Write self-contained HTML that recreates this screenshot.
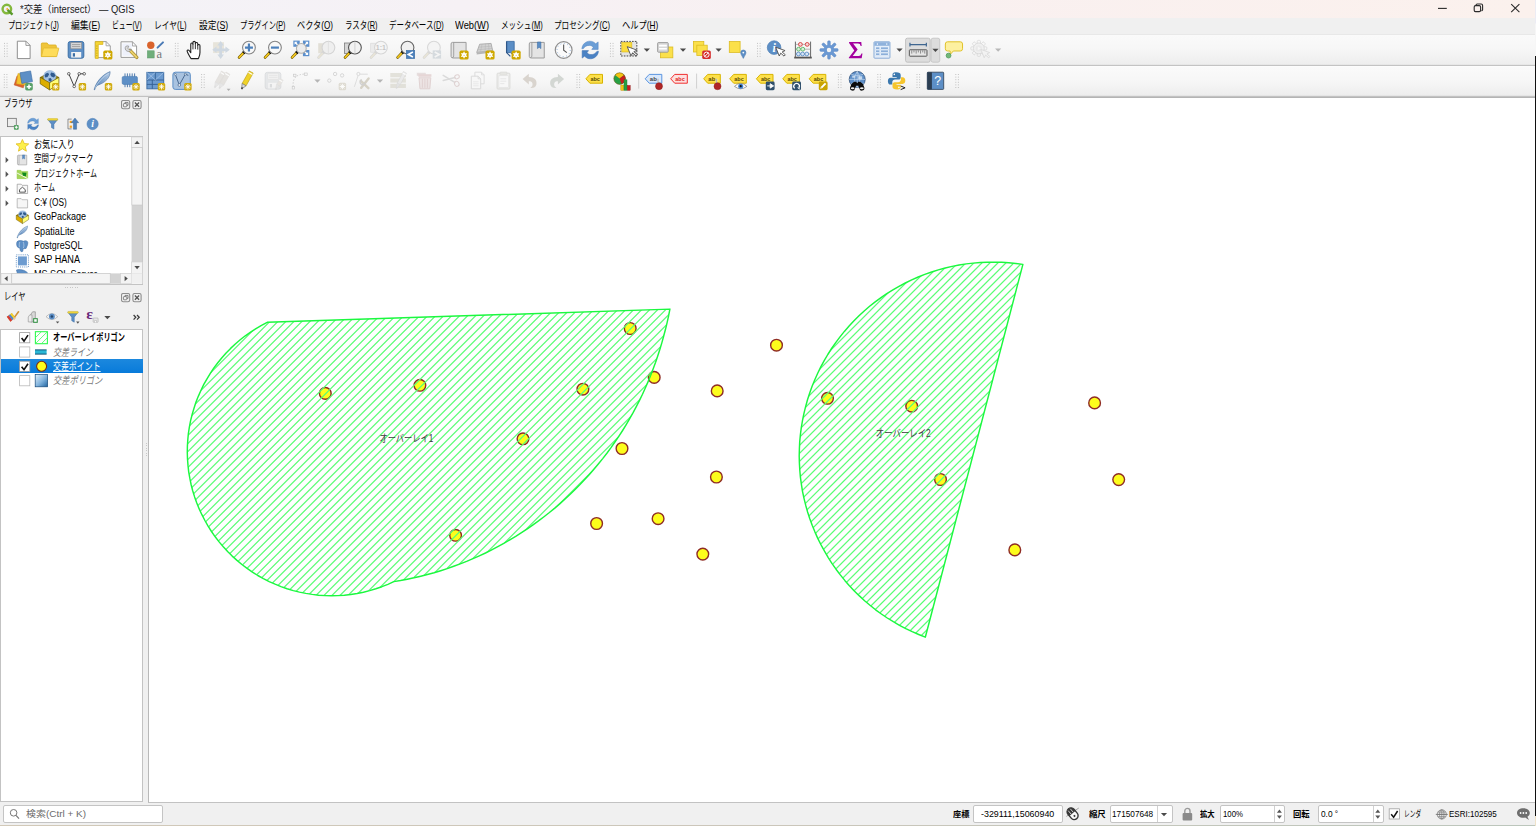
<!DOCTYPE html>
<html lang="ja"><head><meta charset="utf-8"><title>*交差（intersect） — QGIS</title>
<style>
html,body{margin:0;padding:0}
body{width:1536px;height:826px;overflow:hidden;position:relative;background:#f0f0f0;font-family:"Liberation Sans","Noto Sans CJK JP",sans-serif;font-size:10px;color:#000}
div,span,svg{box-sizing:border-box}
.abs{position:absolute}
.t{position:absolute;white-space:nowrap;display:inline-block;transform-origin:0 50%}
u{text-decoration:underline;text-underline-offset:1px}
#titlebar{position:absolute;left:0;top:0;width:1536px;height:18.4px;background:linear-gradient(90deg,#f3f3f8 0%,#f6f1f5 30%,#f9f0f0 60%,#fbf1ed 100%)}
#menubar{position:absolute;left:0;top:18.4px;width:1536px;height:15px;background:#f0f0f0}
.toolbar{position:absolute;left:0;width:1536px}
.toolbar svg{position:absolute;left:0;top:0}
#tb1{top:33.6px;height:32.4px;background:linear-gradient(#e4e4e4 0,#e8e8e8 0.5px,#fafafa 1.2px,#f6f6f6 16px,#eeeeee 29.6px,#e4e4e4 30.8px,#c3c3c3 31.5px,#c3c3c3 32.4px)}
#tb2{top:66px;height:31px;background:linear-gradient(#fdfdfd 0,#fafafa 1.5px,#f6f6f6 16px,#eeeeee 28.4px,#e4e4e4 29.6px,#c2c2c2 30.2px,#c2c2c2 31px)}
.panel-box{position:absolute;background:#fff;border:1px solid #c3c3c3}
#canvas{position:absolute;left:148px;top:97px;width:1386.6px;height:706px;background:#fff;border-left:1px solid #b9b9b9;border-top:1px solid #b4b4b4;border-bottom:1px solid #c2c2c2}
#statusbar{position:absolute;left:0;top:803px;width:1536px;height:23px;background:#f0f0f0}
.field{position:absolute;background:#fff;border:1px solid #c4c4c4;border-radius:2px}
</style></head><body>
<div id="titlebar">
<svg class="abs" style="left:1.4px;top:2.8px" width="13" height="13" viewBox="0 0 14 14"><circle cx="6.3" cy="6.5" r="4.6" fill="none" stroke="#84b83f" stroke-width="2.6"/><path d="M7,7.5 L12.4,12.6" stroke="#5a9a2c" stroke-width="2.6"/><path d="M4.8,6.6 l2.2,-1.6 l1.2,2.6z" fill="#f2a01e"/></svg>
<span id="t1" class="t " style="left:19.5px;top:2.6px;font-size:10.0px;line-height:14px;color:#1a1a1a;transform:scaleX(0.9358);">*交差（intersect） — QGIS</span>
<svg class="abs" style="left:1430px;top:0" width="100" height="18" viewBox="0 0 100 18"><path d="M8,8.4 h8.8" stroke="#2a2a2a" stroke-width="1.1"/><rect x="44.2" y="5.6" width="6.4" height="6" rx="1.3" fill="none" stroke="#2a2a2a" stroke-width="1.1"/><path d="M46,5.4 v-0.2 a1.2,1.2 0 0 1 1.2,-1.2 h4 a1.4,1.4 0 0 1 1.4,1.4 v4 a1.2,1.2 0 0 1 -1.2,1.2" fill="none" stroke="#2a2a2a" stroke-width="1.1"/><path d="M81.2,4.2 l8.2,8 M89.4,4.2 l-8.2,8" stroke="#2a2a2a" stroke-width="1.1"/></svg>
</div>
<div id="menubar">
<span id="t2" class="t " style="left:8.1px;top:0.3px;font-size:10.3px;line-height:14px;color:#000;transform:scaleX(0.6882);">プロジェクト(<u>J</u>)</span>
<span id="t3" class="t " style="left:71.0px;top:0.3px;font-size:10.3px;line-height:14px;color:#000;transform:scaleX(0.8531);">編集(<u>E</u>)</span>
<span id="t4" class="t " style="left:112.2px;top:0.3px;font-size:10.3px;line-height:14px;color:#000;transform:scaleX(0.6653);">ビュー(<u>V</u>)</span>
<span id="t5" class="t " style="left:153.6px;top:0.3px;font-size:10.3px;line-height:14px;color:#000;transform:scaleX(0.7548);">レイヤ(<u>L</u>)</span>
<span id="t6" class="t " style="left:199.0px;top:0.3px;font-size:10.3px;line-height:14px;color:#000;transform:scaleX(0.8531);">設定(<u>S</u>)</span>
<span id="t7" class="t " style="left:240.0px;top:0.3px;font-size:10.3px;line-height:14px;color:#000;transform:scaleX(0.6975);">プラグイン(<u>P</u>)</span>
<span id="t8" class="t " style="left:297.0px;top:0.3px;font-size:10.3px;line-height:14px;color:#000;transform:scaleX(0.7934);">ベクタ(<u>O</u>)</span>
<span id="t9" class="t " style="left:344.5px;top:0.3px;font-size:10.3px;line-height:14px;color:#000;transform:scaleX(0.7222);">ラスタ(<u>R</u>)</span>
<span id="t10" class="t " style="left:388.5px;top:0.3px;font-size:10.3px;line-height:14px;color:#000;transform:scaleX(0.7251);">データベース(<u>D</u>)</span>
<span id="t11" class="t " style="left:455.0px;top:0.3px;font-size:10.3px;line-height:14px;color:#000;transform:scaleX(0.9048);">Web(<u>W</u>)</span>
<span id="t12" class="t " style="left:500.5px;top:0.3px;font-size:10.3px;line-height:14px;color:#000;transform:scaleX(0.7380);">メッシュ(<u>M</u>)</span>
<span id="t13" class="t " style="left:554.2px;top:0.3px;font-size:10.3px;line-height:14px;color:#000;transform:scaleX(0.7372);">プロセシング(<u>C</u>)</span>
<span id="t14" class="t " style="left:622.3px;top:0.3px;font-size:10.3px;line-height:14px;color:#000;transform:scaleX(0.8008);">ヘルプ(<u>H</u>)</span>
</div>
<div id="tb1" class="toolbar"><svg width="1536" height="32.4" viewBox="0 33.6 1536 32.4">
<path d="M175.2,42.5 v14 M177.8,42.5 v14" stroke="#c2c2c2" stroke-width="1" stroke-dasharray="1,1.6" fill="none"/>
<path d="M610.4,42.5 v14 M613.0,42.5 v14" stroke="#c2c2c2" stroke-width="1" stroke-dasharray="1,1.6" fill="none"/>
<path d="M757.5,42.5 v14 M760.1,42.5 v14" stroke="#c2c2c2" stroke-width="1" stroke-dasharray="1,1.6" fill="none"/>
<path d="M4.3,42.5 v14 M6.9,42.5 v14" stroke="#c2c2c2" stroke-width="1" stroke-dasharray="1,1.6" fill="none"/>
<g transform="translate(13.5,39.6)"><path d="M3.6,1.2 H12.2 L16.4,5.4 V18.6 H3.6 Z" fill="#fff" stroke="#8f8f8f" stroke-width="1" stroke-linejoin="round"/><path d="M12.2,1.2 V5.4 H16.4" fill="none" stroke="#8f8f8f" stroke-width="0.9"/></g>
<g transform="translate(39.5,39.6)"><path d="M1.6,4 Q1.6,3 2.6,3 H7.4 L9,5 H15.6 Q16.6,5 16.6,6 V16.4 H1.6 Z" fill="#f0c53a" stroke="#d9ad22" stroke-width="0.8"/><path d="M4.4,8 H18.4 Q19.2,8 19,8.8 L17,16.6 H1.8 L3.6,8.8 Q3.8,8 4.4,8 Z" fill="#fedc5a" stroke="#e2b92e" stroke-width="0.8" stroke-linejoin="round"/></g>
<g transform="translate(66.0,39.6)"><rect x="2" y="1.6" width="15.6" height="16.6" rx="2" fill="#5d8fc6" stroke="#3b6ea5" stroke-width="1"/><rect x="4.6" y="2.6" width="10.8" height="6.2" fill="#d9d9d9" stroke="#8a8a8a" stroke-width="0.6"/><path d="M5.8,4.6 h8.4 M5.8,6.6 h8.4" stroke="#9a9a9a" stroke-width="0.9"/><rect x="5" y="12" width="10" height="5.6" fill="#f4f4f4"/><rect x="6.6" y="13.2" width="2.2" height="3.4" fill="#3b6ea5"/></g>
<g transform="translate(92.7,39.6)"><path d="M2.4,1.6 H13.2 L17.4,5.8 V17.6 H2.4 Z" fill="#fff" stroke="#a0a0a0" stroke-width="1" stroke-linejoin="round"/><path d="M13.2,1.6 V5.8 H17.4" fill="none" stroke="#a0a0a0" stroke-width="0.9"/><path d="M2.4,1.6 H10 V4.4 H5.4 V18.4 H2.4 Z" fill="#f6d535" stroke="#d6b21a" stroke-width="0.7"/><path d="M3.2,6 h1.4 M3.2,8.4 h1.4 M3.2,10.8 h1.4 M3.2,13.2 h1.4 M3.2,15.6 h1.4" stroke="#b8950c" stroke-width="0.6"/><rect x="10.40" y="10.50" width="9.1" height="9.1" rx="1.7" fill="#cfa800"/><polygon points="14.95,11.35 15.97,13.27 18.15,13.20 17.00,15.05 18.15,16.90 15.97,16.83 14.95,18.75 13.93,16.83 11.75,16.90 12.90,15.05 11.75,13.20 13.92,13.27" fill="#fff"/><circle cx="14.95" cy="15.25" r="0.5" fill="#cfa800"/></g>
<g transform="translate(119.2,39.6)"><path d="M1.6,1.8 H13.0 L17.2,6.0 V17.4 H1.6 Z" fill="#fff" stroke="#9a9a9a" stroke-width="1" stroke-linejoin="round"/><path d="M13.0,1.8 V6.0 H17.2" fill="none" stroke="#9a9a9a" stroke-width="0.9"/><rect x="3" y="3.4" width="9.4" height="12.4" fill="#eef1fb"/><path d="M10.6,10.4 L17.4,17.4" stroke="#a58a2a" stroke-width="3.4" stroke-linecap="round"/><path d="M10.8,10.6 L17.2,17.2" stroke="#e9cf6a" stroke-width="2" stroke-linecap="round"/><path d="M6.4,6.4 a3.2,3.2 0 1 0 5.6,3 l-2.2,0.4 l-1.4,-1.6 l1,-2 a3.2,3.2 0 0 0 -3,0.2z" fill="#dcdcdc" stroke="#8a8a8a" stroke-width="0.7"/></g>
<g transform="translate(145.0,39.6)"><circle cx="5.6" cy="5.2" r="3.7" fill="#d9632c"/><path d="M12.4,7.6 L17.8,2.4" stroke="#4a7ab5" stroke-width="2" stroke-linecap="round"/><rect x="2.2" y="10.8" width="6.8" height="7.2" fill="#6fae7a" stroke="#5b9a66" stroke-width="0.5"/><text x="11.4" y="17.6" font-size="12.5" fill="#777" font-family="Liberation Serif,serif">a</text></g>
<g transform="translate(184.6,39.6)"><path d="M6.2,18.6 C4.4,15.4 3,13.4 2.4,11.4 C2,10 3.6,9.4 4.6,10.8 L6,12.8 V4.2 C6,2.6 8.2,2.6 8.2,4.2 V2.6 C8.2,1 10.6,1 10.6,2.6 V3.6 C10.6,2 13,2.2 13,3.8 V5.4 C13,4 15.2,4.2 15.2,5.8 V12.4 C15.2,15.4 14.4,16.8 13.6,18.6 Z" fill="#fff" stroke="#1e1e1e" stroke-width="1.1" stroke-linejoin="round"/><path d="M8.2,4.2 V9.4 M10.6,3.6 V9.2 M13,5.4 V9.6" stroke="#1e1e1e" stroke-width="0.9" fill="none"/></g>
<g transform="translate(211.0,39.6)"><rect x="1.9" y="2.2" width="10.9" height="10.9" fill="#e7e4da"/><path d="M9.5,1.1 L12.8,5.4 H10.9 V8.4 H14.3 V6.5 L18.6,9.8 L14.3,13.1 V11.2 H10.9 V14.4 H12.8 L9.5,18.9 L6.2,14.4 H8.1 V11.2 H5.3 V13.1 L1.1,9.8 L5.3,6.5 V8.4 H8.1 V5.4 H6.2 Z" fill="#cfd8e1"/></g>
<g transform="translate(237.0,39.6)"><path d="M7.4,11.8 L2,17.4" stroke="#6a5600" stroke-width="2.8" stroke-linecap="round"/><path d="M6.3,12.9 L2.1,17.3" stroke="#f3c61e" stroke-width="1.7" stroke-linecap="round"/><path d="M7.6,11.6 L6.1,13.1" stroke="#111" stroke-width="3"/><circle cx="11.8" cy="7.6" r="6.4" fill="#f8f8f8" stroke="#858585" stroke-width="1.1"/><path d="M11.8,3.6 v8 M7.8,7.6 h8" stroke="#4c80bb" stroke-width="2.2"/></g>
<g transform="translate(263.0,39.6)"><path d="M7.4,11.8 L2,17.4" stroke="#6a5600" stroke-width="2.8" stroke-linecap="round"/><path d="M6.3,12.9 L2.1,17.3" stroke="#f3c61e" stroke-width="1.7" stroke-linecap="round"/><path d="M7.6,11.6 L6.1,13.1" stroke="#111" stroke-width="3"/><circle cx="11.8" cy="7.6" r="6.4" fill="#f8f8f8" stroke="#858585" stroke-width="1.1"/><path d="M7.8,7.6 h8" stroke="#4c80bb" stroke-width="2.2"/></g>
<g transform="translate(290.0,39.6)"><rect x="3.2" y="0.6" width="6.4" height="6.2" fill="#5b8fcc"/><rect x="12.8" y="0.6" width="6.4" height="6.2" fill="#5b8fcc"/><rect x="12.8" y="10" width="6.4" height="6.2" fill="#5b8fcc"/><path d="M4.4,1.8 h3 l-1,1 l1.6,1.6 l-1,1 l-1.6,-1.6 l-1,1z M18,1.8 v3 l-1,-1 l-1.6,1.6 l-1,-1 l1.6,-1.6 l-1,-1z M18,15 h-3 l1,-1 l-1.6,-1.6 l1,-1 l1.6,1.6 l1,-1z" fill="#fff"/><path d="M15.4,7 l2.6,1.6 l-2.6,1.6z" fill="#f4f4f4"/><path d="M7.4,11.8 L2,17.4" stroke="#6a5600" stroke-width="2.8" stroke-linecap="round"/><path d="M6.3,12.9 L2.1,17.3" stroke="#f3c61e" stroke-width="1.7" stroke-linecap="round"/><path d="M7.6,11.6 L6.1,13.1" stroke="#111" stroke-width="3"/><circle cx="11.2" cy="8.4" r="4.9" fill="#ececec" stroke="#b0b0b0" stroke-width="1.1"/></g>
<g transform="translate(316.5,39.6)"><rect x="1.6" y="3.2" width="8" height="10" fill="#e2dfd6"/><path d="M7.4,11.8 L2,17.4" stroke="#d6d6d6" stroke-width="2.8" stroke-linecap="round"/><path d="M6.3,12.9 L2.1,17.3" stroke="#e8e4d6" stroke-width="1.7" stroke-linecap="round"/><path d="M7.6,11.6 L6.1,13.1" stroke="#d6d6d6" stroke-width="3"/><circle cx="11.8" cy="7.6" r="6.4" fill="#efefef" stroke="#d4d4d4" stroke-width="1.1"/><path d="M11.8,1.6 v12" stroke="#dedede" stroke-width="0.8"/></g>
<g transform="translate(343.0,39.6)"><rect x="1.4" y="3" width="8" height="10.4" fill="#d6d6d6" stroke="#7d7d7d" stroke-width="0.8"/><path d="M7.4,11.8 L2,17.4" stroke="#6a5600" stroke-width="2.8" stroke-linecap="round"/><path d="M6.3,12.9 L2.1,17.3" stroke="#f3c61e" stroke-width="1.7" stroke-linecap="round"/><path d="M7.6,11.6 L6.1,13.1" stroke="#111" stroke-width="3"/><circle cx="11.8" cy="7.6" r="6.4" fill="#f2f2f2" stroke="#555" stroke-width="1.1"/><path d="M11.8,1.6 v12" stroke="#c8c8c8" stroke-width="0.8"/></g>
<g transform="translate(369.0,39.6)"><rect x="1.6" y="3.2" width="8" height="9" fill="#ebebeb" stroke="#d8d8d8" stroke-width="0.6"/><path d="M7.4,11.8 L2,17.4" stroke="#d6d6d6" stroke-width="2.8" stroke-linecap="round"/><path d="M6.3,12.9 L2.1,17.3" stroke="#e8e4d6" stroke-width="1.7" stroke-linecap="round"/><path d="M7.6,11.6 L6.1,13.1" stroke="#d6d6d6" stroke-width="3"/><circle cx="11.8" cy="7.6" r="6.4" fill="#f5f5f5" stroke="#d6d6d6" stroke-width="1.1"/><text x="11.8" y="10.2" font-size="7" fill="#c6c6c6" text-anchor="middle" font-family="Liberation Sans,sans-serif" font-weight="bold">1:1</text></g>
<g transform="translate(395.6,39.6)"><path d="M7.4,11.8 L2,17.4" stroke="#6a5600" stroke-width="2.8" stroke-linecap="round"/><path d="M6.3,12.9 L2.1,17.3" stroke="#f3c61e" stroke-width="1.7" stroke-linecap="round"/><path d="M7.6,11.6 L6.1,13.1" stroke="#111" stroke-width="3"/><circle cx="11.8" cy="7.6" r="6.4" fill="#f0f0f0" stroke="#666" stroke-width="1.1"/><rect x="10.6" y="10.4" width="8.4" height="8.2" fill="#4c80bb" stroke="#3b6ea5" stroke-width="0.6"/><path d="M17.2,12 L12.6,14.5 L17.2,17" stroke="#fff" stroke-width="1.6" fill="none"/></g>
<g transform="translate(422.0,39.6)"><path d="M7.4,11.8 L2,17.4" stroke="#d8d8d8" stroke-width="2.8" stroke-linecap="round"/><path d="M6.3,12.9 L2.1,17.3" stroke="#e8e4d6" stroke-width="1.7" stroke-linecap="round"/><path d="M7.6,11.6 L6.1,13.1" stroke="#d8d8d8" stroke-width="3"/><circle cx="11.8" cy="7.6" r="6.4" fill="#f4f4f4" stroke="#d8d8d8" stroke-width="1.1"/><rect x="10.6" y="10.4" width="8.4" height="8.2" fill="#d5dade"/><path d="M12.6,12 L17.2,14.5 L12.6,17" stroke="#f4f4f4" stroke-width="1.6" fill="none"/></g>
<g transform="translate(449.0,39.6)"><path d="M3.2,2.4 Q2,2.4 2,4 V16.4 Q2,18 4,18 H17 V2.4 Z" fill="#e4e4e4" stroke="#9c9c9c" stroke-width="1" stroke-linejoin="round"/><path d="M4.6,2.6 V16 Q4.6,17.8 3,17.6" fill="none" stroke="#9c9c9c" stroke-width="0.9"/><rect x="10.40" y="10.50" width="9.1" height="9.1" rx="1.7" fill="#cfa800"/><polygon points="14.95,11.35 15.97,13.27 18.15,13.20 17.00,15.05 18.15,16.90 15.97,16.83 14.95,18.75 13.93,16.83 11.75,16.90 12.90,15.05 11.75,13.20 13.92,13.27" fill="#fff"/><circle cx="14.95" cy="15.25" r="0.5" fill="#cfa800"/></g>
<g transform="translate(475.0,39.6)"><path d="M4.6,4.2 L16,3.4 L17.6,10.8 L1.6,12.4 Z" fill="#d2d2d2" stroke="#a2a2a2" stroke-width="0.8" stroke-linejoin="round"/><path d="M1.6,12.4 L17.6,10.8 V12.6 L1.6,14.4 Z" fill="#b5b5b5"/><path d="M7,4 L5.4,12 M10.4,3.8 L10,11.6 M13.4,3.6 L14,11.2 M3.6,7.2 L16.8,6.2 M2.8,9.8 L17.2,8.4" stroke="#b4b4b4" stroke-width="0.5"/><rect x="10.40" y="10.50" width="9.1" height="9.1" rx="1.7" fill="#cfa800"/><polygon points="14.95,11.35 15.97,13.27 18.15,13.20 17.00,15.05 18.15,16.90 15.97,16.83 14.95,18.75 13.93,16.83 11.75,16.90 12.90,15.05 11.75,13.20 13.92,13.27" fill="#fff"/><circle cx="14.95" cy="15.25" r="0.5" fill="#cfa800"/></g>
<g transform="translate(503.5,39.6)"><path d="M3,1.4 H10.6 V16 L6.8,12.6 L3,12.6 Z" fill="#5b8ec6" stroke="#3f6fa6" stroke-width="0.9" stroke-linejoin="round"/><path d="M3,1.4 V12.6 L6.8,16.4" fill="none" stroke="#2f5688" stroke-width="1.2"/><rect x="8.00" y="10.50" width="9.1" height="9.1" rx="1.7" fill="#cfa800"/><polygon points="12.55,11.35 13.58,13.27 15.75,13.20 14.60,15.05 15.75,16.90 13.58,16.83 12.55,18.75 11.53,16.83 9.35,16.90 10.50,15.05 9.35,13.20 11.53,13.27" fill="#fff"/><circle cx="12.55" cy="15.25" r="0.5" fill="#cfa800"/></g>
<g transform="translate(527.2,39.6)"><path d="M3.2,2.4 Q2,2.4 2,4 V16.4 Q2,18 4,18 H17 V2.4 Z" fill="#e4e4e4" stroke="#9c9c9c" stroke-width="1" stroke-linejoin="round"/><path d="M4.6,2.6 V16 Q4.6,17.8 3,17.6" fill="none" stroke="#9c9c9c" stroke-width="0.9"/><path d="M10.2,2 H13.6 V8.6 L11.9,7.2 L10.2,8.6 Z" fill="#5b8ec6" stroke="#3f6fa6" stroke-width="0.6"/></g>
<g transform="translate(553.6,39.6)"><circle cx="10" cy="10" r="8.4" fill="#fbfbfb" stroke="#8e8e8e" stroke-width="1.2"/><circle cx="10" cy="10" r="6.6" fill="none" stroke="#7ea4d2" stroke-width="0.9" stroke-dasharray="0.9,2.55"/><path d="M10,4.6 V10.2 L13.2,12.6" stroke="#555" stroke-width="1.1" fill="none"/></g>
<g transform="translate(580.0,39.6)"><g transform="scale(1.0)"><path d="M1.8,8.8 C2.2,4 6,1.2 9.8,1.2 C12.2,1.2 14.2,2.2 15.6,3.8 L18.1,1.9 V9.4 H11.7 L13.3,7.2 C12,5.8 10.6,5.4 9.2,5.4 C6.6,5.4 4.6,6.6 3.4,8.6 Z" fill="#6b9ed6" stroke="#4a80c0" stroke-width="0.5" stroke-linejoin="round"/><path d="M1.8,8.8 C2.2,4 6,1.2 9.8,1.2 C12.2,1.2 14.2,2.2 15.6,3.8 L18.1,1.9 V9.4 H11.7 L13.3,7.2 C12,5.8 10.6,5.4 9.2,5.4 C6.6,5.4 4.6,6.6 3.4,8.6 Z" fill="#4a82c4" stroke="#3b70b0" stroke-width="0.5" stroke-linejoin="round" transform="rotate(180 10.1 10)"/></g></g>
<g transform="translate(619.6,39.6)"><rect x="1.2" y="1.4" width="16" height="14.6" fill="#e4e4e4" stroke="#333" stroke-width="0.9" stroke-dasharray="1.6,1.2"/><rect x="2.2" y="2.4" width="10" height="9.6" fill="#fbdc3c" stroke="#d8b81c" stroke-width="0.6"/><path transform="translate(7.6,6.6) rotate(-22) scale(1.00)" d="M0,0 L0,10 L2.6,7.8 L4.6,12 L6.4,11.2 L4.4,7.2 L7.8,7 Z" fill="#fff" stroke="#555" stroke-width="0.9" stroke-linejoin="round"/></g>
<path d="M643.7,48.1 h6.2 l-3.1,3.3z" fill="#4a4a4a"/>
<g transform="translate(656.0,39.6)"><rect x="4.4" y="7" width="12.4" height="10.8" fill="#fbe04a" stroke="#dcbc22" stroke-width="0.8"/><rect x="1.6" y="2.6" width="10.6" height="9.6" rx="0.8" fill="#d8d8d8" stroke="#8c8c8c" stroke-width="0.8"/><path d="M3,5.6 h7.8 M3,8.8 h7.8" stroke="#fff" stroke-width="1.6"/></g>
<path d="M679.9,48.1 h6.2 l-3.1,3.3z" fill="#4a4a4a"/>
<g transform="translate(692.0,39.6)"><rect x="1.4" y="1.6" width="10.4" height="10.4" fill="#fbe04a" stroke="#dcbc22" stroke-width="0.8"/><rect x="4.8" y="5.2" width="10.4" height="10.4" fill="#fbe04a" stroke="#dcbc22" stroke-width="0.8"/><rect x="10.2" y="10.4" width="8.6" height="8.6" rx="1.6" fill="#d52b2b"/><circle cx="14.5" cy="14.7" r="2.6" fill="none" stroke="#fff" stroke-width="1"/><path d="M12.7,16.5 l3.6,-3.6" stroke="#fff" stroke-width="1"/></g>
<path d="M715.5,48.1 h6.2 l-3.1,3.3z" fill="#4a4a4a"/>
<g transform="translate(727.7,39.6)"><rect x="1.6" y="1.6" width="10.8" height="10.8" fill="#fbe04a" stroke="#dcbc22" stroke-width="0.8"/><path d="M15.6,18.4 C14,15.4 13,14.2 13,12.6 A2.6,2.6 0 0 1 18.2,12.6 C18.2,14.2 17.2,15.4 15.6,18.4 Z" fill="#5d8fc6" stroke="#3f6fa6" stroke-width="0.5"/><circle cx="15.6" cy="12.6" r="0.9" fill="#fff"/></g>
<g transform="translate(766.5,39.6)"><circle cx="7.6" cy="7.6" r="6.8" fill="#5d8fc6" stroke="#4d7fb6" stroke-width="0.7"/><text x="7.6" y="11.7" font-size="11.9" font-weight="bold" font-style="italic" fill="#fff" text-anchor="middle" font-family="Liberation Serif,serif">i</text><path transform="translate(9.2,7.2) rotate(-22) scale(0.95)" d="M0,0 L0,10 L2.6,7.8 L4.6,12 L6.4,11.2 L4.4,7.2 L7.8,7 Z" fill="#fff" stroke="#555" stroke-width="0.9" stroke-linejoin="round"/></g>
<g transform="translate(793.0,39.6)"><path d="M2.4,1.6 V17 M17.6,1.6 V17" stroke="#666" stroke-width="1"/><path d="M1.2,17.6 H18.8" stroke="#555" stroke-width="1.8"/><path d="M2.4,4.4 H17.6 M2.4,9.2 H17.6 M2.4,14 H17.6" stroke="#888" stroke-width="0.6"/><circle cx="7.4" cy="4.4" r="1.9" fill="#f7d6d6" stroke="#d53a3a" stroke-width="0.9"/><circle cx="14.2" cy="4.4" r="1.9" fill="#f7d6d6" stroke="#d53a3a" stroke-width="0.9"/><circle cx="5.6" cy="9.2" r="1.9" fill="#d6f0d8" stroke="#5cb567" stroke-width="0.9"/><circle cx="9.8" cy="9.2" r="1.9" fill="#d6f0d8" stroke="#5cb567" stroke-width="0.9"/><circle cx="5.4" cy="14" r="1.9" fill="#d6e6f6" stroke="#5d8fc6" stroke-width="0.9"/><circle cx="9.6" cy="14" r="1.9" fill="#d6e6f6" stroke="#5d8fc6" stroke-width="0.9"/><circle cx="13.8" cy="14" r="1.9" fill="#d6e6f6" stroke="#5d8fc6" stroke-width="0.9"/></g>
<g transform="translate(819.0,39.6)"><g transform="translate(10,10)"><rect x="-1.4" y="-9.2" width="2.8" height="6" rx="1.1" fill="#6a98d2" stroke="#5584c2" stroke-width="0.4" transform="rotate(0)"/><rect x="-1.4" y="-9.2" width="2.8" height="6" rx="1.1" fill="#6a98d2" stroke="#5584c2" stroke-width="0.4" transform="rotate(45)"/><rect x="-1.4" y="-9.2" width="2.8" height="6" rx="1.1" fill="#6a98d2" stroke="#5584c2" stroke-width="0.4" transform="rotate(90)"/><rect x="-1.4" y="-9.2" width="2.8" height="6" rx="1.1" fill="#6a98d2" stroke="#5584c2" stroke-width="0.4" transform="rotate(135)"/><rect x="-1.4" y="-9.2" width="2.8" height="6" rx="1.1" fill="#6a98d2" stroke="#5584c2" stroke-width="0.4" transform="rotate(180)"/><rect x="-1.4" y="-9.2" width="2.8" height="6" rx="1.1" fill="#6a98d2" stroke="#5584c2" stroke-width="0.4" transform="rotate(225)"/><rect x="-1.4" y="-9.2" width="2.8" height="6" rx="1.1" fill="#6a98d2" stroke="#5584c2" stroke-width="0.4" transform="rotate(270)"/><rect x="-1.4" y="-9.2" width="2.8" height="6" rx="1.1" fill="#6a98d2" stroke="#5584c2" stroke-width="0.4" transform="rotate(315)"/><circle r="5.2" fill="#6a98d2"/><circle r="2.2" fill="#f4f4f4"/></g></g>
<g transform="translate(845.7,39.6)"><path d="M3.4,2 H15.6 L16,6 H15 Q14.6,3.6 12.4,3.6 H7.4 L12,9.6 L7,16 H13 Q15.2,16 15.8,13.4 H16.8 L16,18.2 H3.2 V17.4 L8.6,10.4 L3.4,3 Z" fill="#a3009e"/></g>
<g transform="translate(872.0,39.6)"><rect x="2" y="1.8" width="16" height="16.4" rx="0.8" fill="#e6effa" stroke="#7ea4d2" stroke-width="0.9"/><rect x="2.4" y="2.2" width="15.2" height="3.6" fill="#8fb2dc"/><path d="M5.4,3.2 v1.8 M14.8,3.2 v1.8" stroke="#e6effa" stroke-width="1"/><path d="M4,8.2 h3.4 M9,8.2 h7 M4,11.2 h3.4 M9,11.2 h7 M4,14.2 h3.4 M9,14.2 h7" stroke="#6f9bd0" stroke-width="1.3"/><path d="M2.4,9.7 h15.2 M2.4,12.7 h15.2 M2.4,15.7 h15.2" stroke="#c4d6ec" stroke-width="0.5"/></g>
<path d="M896.5,48.1 h6.2 l-3.1,3.3z" fill="#4a4a4a"/>
<rect x="905.6" y="37.8" width="24.6" height="24" rx="1.8" fill="#dddddd" stroke="#b9b9b9" stroke-width="0.8"/><rect x="931.2" y="37.8" width="8.6" height="24" rx="1.8" fill="#dddddd" stroke="#c2c2c2" stroke-width="0.8"/>
<g transform="translate(908.2,39.6)"><path d="M1.8,4.6 H18.2 M1.8,2.8 V6.4 M18.2,2.8 V6.4" stroke="#3f6690" stroke-width="1.2" fill="none"/><rect x="1.2" y="9.8" width="17.6" height="6.4" rx="0.6" fill="#e6e6e6" stroke="#555" stroke-width="1"/><path d="M3.6,10.4 v3.2 M5.8,10.4 v2 M8,10.4 v3.2 M10.2,10.4 v2 M12.4,10.4 v3.2 M14.6,10.4 v2 M16.6,10.4 v3.2" stroke="#666" stroke-width="0.7"/></g>
<path d="M932.4,48.3 h6.2 l-3.1,3.3z" fill="#4a4a4a"/>
<g transform="translate(944.0,39.6)"><path d="M3.6,1.8 H16.4 Q18.6,1.8 18.6,4 V8.8 Q18.6,11 16.4,11 H9.4 L6.2,14.6 V11 H3.6 Q1.4,11 1.4,8.8 V4 Q1.4,1.8 3.6,1.8 Z" fill="#fdf0a0" stroke="#e0c22a" stroke-width="1" stroke-linejoin="round"/><circle cx="4.6" cy="15.6" r="2.4" fill="#72b779" stroke="#4d9a58" stroke-width="0.8"/></g>
<g transform="translate(970.3,39.6)"><g opacity="0.55"><g transform="translate(8.6,8.4)"><rect x="-1.6" y="-8" width="3.2" height="4" rx="1" fill="none" stroke="#c2c2c2" stroke-width="0.8" transform="rotate(0)"/><rect x="-1.6" y="-8" width="3.2" height="4" rx="1" fill="none" stroke="#c2c2c2" stroke-width="0.8" transform="rotate(45)"/><rect x="-1.6" y="-8" width="3.2" height="4" rx="1" fill="none" stroke="#c2c2c2" stroke-width="0.8" transform="rotate(90)"/><rect x="-1.6" y="-8" width="3.2" height="4" rx="1" fill="none" stroke="#c2c2c2" stroke-width="0.8" transform="rotate(135)"/><rect x="-1.6" y="-8" width="3.2" height="4" rx="1" fill="none" stroke="#c2c2c2" stroke-width="0.8" transform="rotate(180)"/><rect x="-1.6" y="-8" width="3.2" height="4" rx="1" fill="none" stroke="#c2c2c2" stroke-width="0.8" transform="rotate(225)"/><rect x="-1.6" y="-8" width="3.2" height="4" rx="1" fill="none" stroke="#c2c2c2" stroke-width="0.8" transform="rotate(270)"/><rect x="-1.6" y="-8" width="3.2" height="4" rx="1" fill="none" stroke="#c2c2c2" stroke-width="0.8" transform="rotate(315)"/><circle r="5.4" fill="#ececec" stroke="#c2c2c2" stroke-width="0.9"/><circle r="3.2" fill="#dedede"/><path d="M-1,-1.8 L2,0 L-1,1.8Z" fill="#f6f6f6"/></g><path transform="translate(10.6,9.4) rotate(-22) scale(0.90)" d="M0,0 L0,10 L2.6,7.8 L4.6,12 L6.4,11.2 L4.4,7.2 L7.8,7 Z" fill="#f2f2f2" stroke="#c8c8c8" stroke-width="0.9" stroke-linejoin="round"/></g></g>
<path d="M995.1,48.1 h6.2 l-3.1,3.3z" fill="#b8b8b8"/>
</svg></div>
<div id="tb2" class="toolbar"><svg width="1536" height="31" viewBox="0 66 1536 31">
<path d="M4.3,74.0 v14 M6.9,74.0 v14" stroke="#c2c2c2" stroke-width="1" stroke-dasharray="1,1.6" fill="none"/>
<path d="M201.6,74.0 v14 M204.2,74.0 v14" stroke="#c2c2c2" stroke-width="1" stroke-dasharray="1,1.6" fill="none"/>
<path d="M577.0,74.0 v14 M579.6,74.0 v14" stroke="#c2c2c2" stroke-width="1" stroke-dasharray="1,1.6" fill="none"/>
<path d="M838.4,74.0 v14 M841.0,74.0 v14" stroke="#c2c2c2" stroke-width="1" stroke-dasharray="1,1.6" fill="none"/>
<path d="M877.8,74.0 v14 M880.4,74.0 v14" stroke="#c2c2c2" stroke-width="1" stroke-dasharray="1,1.6" fill="none"/>
<path d="M917.0,74.0 v14 M919.6,74.0 v14" stroke="#c2c2c2" stroke-width="1" stroke-dasharray="1,1.6" fill="none"/>
<path d="M955.8,74.0 v14 M958.4,74.0 v14" stroke="#c2c2c2" stroke-width="1" stroke-dasharray="1,1.6" fill="none"/>
<g transform="translate(13.2,70.8)"><rect x="2.2" y="6.2" width="9.6" height="9.6" fill="#d9632c" stroke="#c25322" stroke-width="0.5" transform="rotate(18 7 11)"/><rect x="4" y="3.4" width="10.4" height="10.4" fill="#f3c32e" stroke="#d9a91c" stroke-width="0.5" transform="rotate(8 9 8.6)"/><rect x="7.6" y="1" width="10.8" height="10.8" fill="#5d8fc6" stroke="#3f6fa6" stroke-width="0.6" transform="rotate(-10 13 6.4)"/><rect x="12" y="12.2" width="7.6" height="7.4" rx="1.6" fill="#58a068"/><path d="M15.8,13.6 v4.6 M13.5,15.9 h4.6" stroke="#fff" stroke-width="1.5"/></g>
<g transform="translate(39.5,70.8)"><path d="M0.7,6.6 L10.1,1.6 L19.4,6.6 L10.1,11.9 Z" fill="#9c8000" stroke="#6b5a00" stroke-width="0.6"/><circle cx="10.3" cy="5.9" r="6.2" fill="#a4c2e4" stroke="#86a8d0" stroke-width="0.5"/><path d="M6.2,2.6 l2.4,-0.6 l1,1.6 l-1.6,2.6 l-2.2,0.4 l-0.8,-2z M11.6,1.8 l3,0.6 l1.4,2.4 l-1.6,2 l-2.6,-1.2 l-1,-2z M9,7.6 l2.2,-0.4 l1.2,2 l-1.4,1.8 l-1.8,-1z" fill="#2f5a8e"/><path d="M0.7,6.6 L10.1,11.9 V19.1 L0.7,13 Z" fill="#dcae00" stroke="#6b5a00" stroke-width="0.7" stroke-linejoin="round"/><path d="M19.4,6.6 L10.1,11.9 V19.1 L19.4,13 Z" fill="#ffff78" stroke="#6b5a00" stroke-width="0.7" stroke-linejoin="round"/><rect x="12.50" y="12.30" width="7.4" height="7.4" rx="1.5" fill="#d0aa0c"/><path d="M13.50,16.00 L18.90,16.00M14.29,14.09 L18.11,17.91M16.20,13.30 L16.20,18.70M18.11,14.09 L14.29,17.91" stroke="#fff" stroke-width="0.85" fill="none"/></g>
<g transform="translate(66.2,70.8)"><path d="M2.6,3 L8,15.6 L13,3 L18,3" fill="none" stroke="#444" stroke-width="1"/><circle cx="2.6" cy="3" r="1.3" fill="#fff" stroke="#444" stroke-width="0.8"/><circle cx="13" cy="3" r="1.3" fill="#fff" stroke="#444" stroke-width="0.8"/><circle cx="18" cy="3" r="1.3" fill="#fff" stroke="#444" stroke-width="0.8"/><circle cx="8" cy="15.6" r="1.3" fill="#fff" stroke="#444" stroke-width="0.8"/><rect x="12.50" y="12.30" width="7.4" height="7.4" rx="1.5" fill="#d0aa0c"/><path d="M13.50,16.00 L18.90,16.00M14.29,14.09 L18.11,17.91M16.20,13.30 L16.20,18.70M18.11,14.09 L14.29,17.91" stroke="#fff" stroke-width="0.85" fill="none"/></g>
<g transform="translate(92.3,70.8)"><defs><linearGradient id="fg" x1="0" y1="1" x2="1" y2="0"><stop offset="0" stop-color="#4f80b8"/><stop offset="1" stop-color="#b4cbe6"/></linearGradient></defs><path d="M1.8,18.8 C3.6,12.4 8.4,4.6 17.8,0.8 C18,6.4 13.6,11.6 5.4,14.4 C4,15.4 3,16.8 2.4,19 Z" fill="url(#fg)" stroke="#466f9f" stroke-width="0.6" stroke-linejoin="round"/><path d="M2.4,17.6 C5.6,11.6 10,6.4 16.4,2.6" fill="none" stroke="#d4e2f2" stroke-width="0.6"/><rect x="12.50" y="12.30" width="7.4" height="7.4" rx="1.5" fill="#d0aa0c"/><path d="M13.50,16.00 L18.90,16.00M14.29,14.09 L18.11,17.91M16.20,13.30 L16.20,18.70M18.11,14.09 L14.29,17.91" stroke="#fff" stroke-width="0.85" fill="none"/></g>
<g transform="translate(119.8,70.8)"><path d="M5.2,2.6 V6 M7.6,2.6 V6 M10,2.6 V6 M12.4,2.6 V6 M14.8,2.6 V6 M5.2,13 V16.4 M7.6,13 V16.4 M10,13 V16.4" stroke="#3f6fa6" stroke-width="0.9"/><rect x="2.4" y="5.6" width="15.2" height="8" rx="1.4" fill="#5d8fc6" stroke="#4677b0" stroke-width="0.6"/><rect x="12.50" y="12.30" width="7.4" height="7.4" rx="1.5" fill="#d0aa0c"/><path d="M13.50,16.00 L18.90,16.00M14.29,14.09 L18.11,17.91M16.20,13.30 L16.20,18.70M18.11,14.09 L14.29,17.91" stroke="#fff" stroke-width="0.85" fill="none"/></g>
<g transform="translate(145.3,70.8)"><rect x="1.6" y="1.6" width="16.8" height="16.4" fill="#6c9bd0" stroke="#3f6fa6" stroke-width="1"/><path d="M1.6,9.2 H18.4 M10,1.6 V9.2 M7,9.2 V18 M1.6,13.6 H18.4" stroke="#335f93" stroke-width="0.9"/><path d="M1.6,1.6 L10,9.2 M10,1.6 L1.6,9.2 M10,9.2 L18.4,1.6" stroke="#a9c6e6" stroke-width="0.7"/><rect x="12.50" y="12.30" width="7.4" height="7.4" rx="1.5" fill="#d0aa0c"/><path d="M13.50,16.00 L18.90,16.00M14.29,14.09 L18.11,17.91M16.20,13.30 L16.20,18.70M18.11,14.09 L14.29,17.91" stroke="#fff" stroke-width="0.85" fill="none"/></g>
<g transform="translate(171.7,70.8)"><rect x="1.2" y="1.4" width="17.4" height="17.2" rx="2.4" fill="#a9c3e0" stroke="#5d8fc6" stroke-width="1"/><path d="M3.6,3.6 L7.6,14.2 L13.6,3.4 L16.6,4.6" fill="none" stroke="#3d5f88" stroke-width="0.9"/><circle cx="7.6" cy="14.2" r="1.3" fill="#fff" stroke="#3d5f88" stroke-width="0.7"/><circle cx="3.6" cy="3.6" r="1" fill="#fff" stroke="#3d5f88" stroke-width="0.6"/><circle cx="13.6" cy="3.4" r="1" fill="#fff" stroke="#3d5f88" stroke-width="0.6"/><rect x="12.50" y="12.30" width="7.4" height="7.4" rx="1.5" fill="#d0aa0c"/><path d="M13.50,16.00 L18.90,16.00M14.29,14.09 L18.11,17.91M16.20,13.30 L16.20,18.70M18.11,14.09 L14.29,17.91" stroke="#fff" stroke-width="0.85" fill="none"/></g>
<g transform="translate(211.3,70.8)"><g opacity="0.5"><path d="M10.1,0.3 L13.9,2.5 L7.8,13.5 L3.9,11.4 Z" fill="#d4d0ca" stroke="#c4c0ba" stroke-width="0.6"/><path d="M3.9,11.4 L7.8,13.5 L3.4,16.8 Z" fill="#d9d9d9" stroke="#ccc" stroke-width="0.6"/><path d="M4.3,15.2 L3.4,16.8" stroke="#ccc" stroke-width="1.6"/><path d="M9.3,1.7 L13.1,3.9" stroke="#fff" stroke-width="1.2"/><path d="M14.7,1.3 L18.5,3.5 L12.4,14.3 L8.5,12.2 Z" fill="#d4d0ca" stroke="#c4c0ba" stroke-width="0.6"/><path d="M8.5,12.2 L12.4,14.3 L8.0,17.6 Z" fill="#d9d9d9" stroke="#ccc" stroke-width="0.6"/><path d="M8.9,16.0 L8.0,17.6" stroke="#ccc" stroke-width="1.6"/><path d="M13.9,2.7 L17.7,4.9" stroke="#fff" stroke-width="1.2"/></g><path d="M15.4,18 h3.8 l-1.9,2.2z" fill="#b0b0b0"/></g>
<g transform="translate(237.0,70.8)"><path d="M12.2,0.1 L16.2,2.3 L9.1,15.0 L5.1,12.7 Z" fill="#efd228" stroke="#b8990a" stroke-width="0.6"/><path d="M5.1,12.7 L9.1,15.0 L4.6,18.2 Z" fill="#d9d9d9" stroke="#666" stroke-width="0.6"/><path d="M5.5,16.6 L4.6,18.2" stroke="#444" stroke-width="1.6"/><path d="M11.4,1.5 L15.4,3.7" stroke="#fff" stroke-width="1.2"/></g>
<g transform="translate(263.2,70.8)"><g opacity="0.55"><rect x="2" y="1.6" width="15.6" height="16.6" rx="2" fill="#d8dbde" stroke="#c6c9cc" stroke-width="1"/><rect x="4.6" y="2.6" width="10.8" height="6.2" fill="#ebebeb" stroke="#d0d0d0" stroke-width="0.6"/><path d="M5.8,4.6 h8.4 M5.8,6.6 h8.4" stroke="#d6d6d6" stroke-width="0.9"/><rect x="5" y="12" width="10" height="5.6" fill="#f4f4f4"/><rect x="6.6" y="13.2" width="2.2" height="3.4" fill="#c6c9cc"/><path d="M16.8,7.7 L20.0,9.5 L16.5,15.4 L13.4,13.6 Z" fill="#dcd7d0" stroke="#ccc" stroke-width="0.6"/><path d="M13.4,13.6 L16.5,15.4 L12.4,18.8 Z" fill="#d9d9d9" stroke="#ccc" stroke-width="0.6"/><path d="M13.3,17.2 L12.4,18.8" stroke="#ccc" stroke-width="1.6"/><path d="M16.0,9.1 L19.1,10.9" stroke="#fff" stroke-width="1.2"/></g></g>
<g transform="translate(290.0,70.8)"><path d="M3.2,16 C2.6,8 5,3.6 15.4,3.2" fill="none" stroke="#c9c9c9" stroke-width="0.9" stroke-dasharray="1.4,1.6"/><rect x="2.2" y="15.6" width="2.4" height="2.6" fill="#f6f6f6" stroke="#c6c6c6" stroke-width="0.6"/><rect x="3.6" y="3.4" width="2.4" height="2.4" fill="#f6f6f6" stroke="#c6c6c6" stroke-width="0.6"/><rect x="14.6" y="2.2" width="2.6" height="2.4" fill="#f6f6f6" stroke="#c6c6c6" stroke-width="0.6"/></g>
<path d="M314.3,79.5 h6.2 l-3.1,3.3z" fill="#b5b5b5"/>
<g transform="translate(326.5,70.8)"><circle cx="8.6" cy="3.2" r="1.7" fill="none" stroke="#cfcfcf" stroke-width="0.8"/><circle cx="15.6" cy="4.6" r="1.7" fill="none" stroke="#cfcfcf" stroke-width="0.8"/><circle cx="2.8" cy="9.8" r="1.7" fill="none" stroke="#cfcfcf" stroke-width="0.8"/><rect x="12.20" y="12.00" width="7.4" height="7.4" rx="1.5" fill="#dedbd2"/><path d="M13.20,15.70 L18.60,15.70M13.99,13.79 L17.81,17.61M15.90,13.00 L15.90,18.40M17.81,13.79 L13.99,17.61" stroke="#fff" stroke-width="0.85" fill="none"/></g>
<g transform="translate(352.8,70.8)"><circle cx="5.6" cy="3.2" r="1.6" fill="none" stroke="#cdcdcd" stroke-width="0.7"/><path d="M7.4,3.4 H15 M5.2,5 L1.6,16" stroke="#d2d2d2" stroke-width="0.7"/><path d="M8,10 L15.6,17.4 M15.8,7.6 L8.4,17" stroke="#d6d2c6" stroke-width="2.4" stroke-linecap="round"/><path d="M9,8.8 a2.6,2.6 0 1 0 3.4,3" fill="none" stroke="#d0d0d0" stroke-width="1.4"/></g>
<path d="M376.9,79.5 h6.2 l-3.1,3.3z" fill="#b5b5b5"/>
<g transform="translate(388.3,70.8)"><g opacity="0.6"><rect x="2" y="2.2" width="15.6" height="4.2" fill="#d6d4c8"/><rect x="2" y="7.6" width="15.6" height="4.2" fill="#d6d4c8"/><rect x="2" y="13" width="15.6" height="4.2" fill="#d6d4c8"/><path d="M15.1,0.8 L18.1,2.4 L11.9,14.0 L8.9,12.4 Z" fill="#e2e2e2" stroke="#c2c2c2" stroke-width="0.6"/><path d="M8.9,12.4 L11.9,14.0 L8.0,17.6 Z" fill="#d9d9d9" stroke="#ccc" stroke-width="0.6"/><path d="M8.9,16.0 L8.0,17.6" stroke="#ccc" stroke-width="1.6"/><path d="M14.3,2.2 L17.3,3.8" stroke="#fff" stroke-width="1.2"/></g></g>
<g transform="translate(413.8,70.8)"><g opacity="0.55"><rect x="3" y="2" width="9" height="3" fill="#d9c9c9"/><rect x="4.6" y="3.4" width="13" height="2.6" fill="#d8bcbc"/><path d="M5.2,7 H17 L16,18 H6.2 Z" fill="#e6d6d6" stroke="#d0b6b6" stroke-width="1"/><path d="M8.6,8 V17 M11.1,8 V17 M13.6,8 V17" stroke="#d0b6b6" stroke-width="1"/></g></g>
<g transform="translate(441.4,70.8)"><g opacity="0.7"><path d="M1.8,4.6 L13.4,11.6 M1.8,9.6 L13.6,6.6" stroke="#cfcfcf" stroke-width="1.5" stroke-linecap="round"/><ellipse cx="15.6" cy="6" rx="2.4" ry="1.9" fill="none" stroke="#d6c4c4" stroke-width="1" transform="rotate(-25 15.6 6)"/><ellipse cx="15.4" cy="13" rx="2.2" ry="2.6" fill="none" stroke="#d6c4c4" stroke-width="1" transform="rotate(-30 15.4 13)"/></g></g>
<g transform="translate(467.7,70.8)"><g opacity="0.7"><path d="M7.2,1.4 H13.8 L16.4,4.0 V13.0 H7.2 Z" fill="#f8f8f8" stroke="#d2d2d2" stroke-width="1" stroke-linejoin="round"/><path d="M13.8,1.4 V4.0 H16.4" fill="none" stroke="#d2d2d2" stroke-width="0.9"/><path d="M3.6,5.4 H10.4 L13.0,8.0 V18.0 H3.6 Z" fill="#f8f8f8" stroke="#cfcfcf" stroke-width="1" stroke-linejoin="round"/><path d="M10.4,5.4 V8.0 H13.0" fill="none" stroke="#cfcfcf" stroke-width="0.9"/><path d="M5.4,11 h5.6 M5.4,13 h5.6 M5.4,15 h5.6" stroke="#dedede" stroke-width="0.7"/></g></g>
<g transform="translate(493.5,70.8)"><g opacity="0.75"><rect x="3.6" y="2.4" width="12.8" height="15.8" rx="0.8" fill="#ececea" stroke="#d0d0cc" stroke-width="0.9"/><rect x="6.6" y="1.2" width="6.8" height="2.8" rx="0.6" fill="#e0e0dc" stroke="#d0d0cc" stroke-width="0.6"/><rect x="5.4" y="5" width="9.4" height="11.6" fill="#f8f8f8" stroke="#d6d6d6" stroke-width="0.5"/><path d="M6.8,8 h6 M6.8,10.4 h6 M6.8,12.8 h4" stroke="#dadada" stroke-width="0.7"/></g></g>
<g transform="translate(520.2,70.8)"><path d="M2.4,8.2 L8.6,3 V6.2 C14,6.2 17,9 16.2,13.6 C15.6,16.4 13,17.4 10,17 C12.4,15.8 12.8,13.6 12,12 C11.4,10.8 10.2,10.4 8.6,10.4 V13.6 Z" fill="#d9d4ce"/></g>
<g transform="translate(546.5,70.8)"><path d="M17.6,8.2 L11.4,3 V6.2 C6,6.2 3,9 3.8,13.6 C4.4,16.4 7,17.4 10,17 C7.6,15.8 7.2,13.6 8,12 C8.6,10.8 9.8,10.4 11.4,10.4 V13.6 Z" fill="#d3d7d3"/></g>
<g transform="translate(584.7,70.8)"><path d="M1.2,8.0 L5.2,3.6 H17.8 V12.4 H5.2 Z" fill="#fde04a" stroke="#d8b400" stroke-width="1" stroke-linejoin="round"/><text x="5.8" y="10.2" font-size="6.2" font-weight="bold" fill="#5a4a00" font-family="Liberation Sans,sans-serif" textLength="9.4" lengthAdjust="spacingAndGlyphs">abc</text></g>
<g transform="translate(612.4,71.8)"><circle cx="7.2" cy="6.8" r="5.8" fill="#27a043"/><path d="M7.2,6.8 L2.6,3.2 A5.8,5.8 0 0 1 11.8,3.2 Z" fill="#f5c211"/><path d="M7.2,6.8 L11.8,3.2 A5.8,5.8 0 0 1 9,12.3 Z" fill="#c81e1e"/><circle cx="7.2" cy="6.8" r="5.8" fill="none" stroke="#704a10" stroke-width="0.5"/><rect x="8.4" y="13.2" width="3" height="5.4" fill="#f5c211" stroke="#b58a00" stroke-width="0.4"/><rect x="11.6" y="8" width="3" height="10.6" fill="#27a043" stroke="#1b7a30" stroke-width="0.4"/><rect x="14.8" y="13.6" width="3" height="5" fill="#c81e1e" stroke="#8a1010" stroke-width="0.4"/></g>
<path d="M638.7,73.6 V88.6" stroke="#d0d0d0" stroke-width="1"/><path d="M696.6,73.6 V88.6" stroke="#d0d0d0" stroke-width="1"/>
<g transform="translate(644.0,70.8)"><path d="M1.2,8.0 L5.2,3.6 H17.8 V12.4 H5.2 Z" fill="#d9e8fb" stroke="#5b95e0" stroke-width="1" stroke-linejoin="round"/><text x="5.8" y="10.2" font-size="6.2" font-weight="bold" fill="#444" font-family="Liberation Sans,sans-serif" textLength="7.0" lengthAdjust="spacingAndGlyphs">ab</text><path d="M14,8 V13" stroke="#e0e0e0" stroke-width="1.6"/><path d="M14,8 V13" stroke="#9a9a9a" stroke-width="0.6"/><circle cx="15" cy="15.4" r="3.5" fill="#b02626" stroke="#8a1a1a" stroke-width="0.5"/></g>
<g transform="translate(669.5,70.8)"><path d="M1.2,8.0 L5.2,3.6 H17.8 V12.4 H5.2 Z" fill="#fde0e0" stroke="#f03030" stroke-width="1" stroke-linejoin="round"/><text x="5.8" y="10.2" font-size="6.2" font-weight="bold" fill="#e02020" font-family="Liberation Sans,sans-serif" textLength="9.4" lengthAdjust="spacingAndGlyphs">abc</text></g>
<g transform="translate(702.5,70.8)"><path d="M1.2,8.0 L5.2,3.6 H17.8 V12.4 H5.2 Z" fill="#fde04a" stroke="#d8b400" stroke-width="1" stroke-linejoin="round"/><text x="5.8" y="10.2" font-size="6.2" font-weight="bold" fill="#5a4a00" font-family="Liberation Sans,sans-serif" textLength="7.0" lengthAdjust="spacingAndGlyphs">ab</text><path d="M14,8 V13" stroke="#e0e0e0" stroke-width="1.6"/><path d="M14,8 V13" stroke="#9a9a9a" stroke-width="0.6"/><circle cx="15" cy="15.4" r="3.5" fill="#b02626" stroke="#8a1a1a" stroke-width="0.5"/></g>
<g transform="translate(728.5,70.8)"><path d="M1.2,8.0 L5.2,3.6 H17.8 V12.4 H5.2 Z" fill="#fde04a" stroke="#d8b400" stroke-width="1" stroke-linejoin="round"/><text x="5.8" y="10.2" font-size="6.2" font-weight="bold" fill="#5a4a00" font-family="Liberation Sans,sans-serif" textLength="9.4" lengthAdjust="spacingAndGlyphs">abc</text><path d="M6,15.6 Q12,9.6 18.4,15.6 Q12,20.4 6,15.6 Z" fill="#fff" stroke="#777" stroke-width="0.7"/><circle cx="12.2" cy="15.4" r="2.5" fill="#3d7fd0"/><circle cx="12.2" cy="15.4" r="1.1" fill="#111"/></g>
<g transform="translate(755.2,70.8)"><path d="M1.2,8.0 L5.2,3.6 H17.8 V12.4 H5.2 Z" fill="#fde04a" stroke="#d8b400" stroke-width="1" stroke-linejoin="round"/><text x="5.8" y="10.2" font-size="6.2" font-weight="bold" fill="#5a4a00" font-family="Liberation Sans,sans-serif" textLength="9.4" lengthAdjust="spacingAndGlyphs">abc</text><rect x="10.6" y="10.8" width="8.8" height="8.6" rx="1.4" fill="#2f4f6c"/><path d="M12,15.1 h3 v-2.2 l3.4,2.2 l-3.4,2.2 v-2.2" fill="#fff" stroke="#fff" stroke-width="0.9" stroke-linejoin="round"/></g>
<g transform="translate(781.6,70.8)"><path d="M1.2,8.0 L5.2,3.6 H17.8 V12.4 H5.2 Z" fill="#fde04a" stroke="#d8b400" stroke-width="1" stroke-linejoin="round"/><text x="5.8" y="10.2" font-size="6.2" font-weight="bold" fill="#5a4a00" font-family="Liberation Sans,sans-serif" textLength="9.4" lengthAdjust="spacingAndGlyphs">abc</text><rect x="10.6" y="10.8" width="8.8" height="8.6" rx="1.4" fill="#2f4f6c"/><path d="M13.2,17.6 A2.8,2.8 0 1 1 17.4,16.8" fill="none" stroke="#fff" stroke-width="1.2"/><path d="M15.4,16.6 h2.6 v2.4z" fill="#fff"/></g>
<g transform="translate(808.0,70.8)"><path d="M1.2,8.0 L5.2,3.6 H17.8 V12.4 H5.2 Z" fill="#fde04a" stroke="#d8b400" stroke-width="1" stroke-linejoin="round"/><text x="5.8" y="10.2" font-size="6.2" font-weight="bold" fill="#5a4a00" font-family="Liberation Sans,sans-serif" textLength="9.4" lengthAdjust="spacingAndGlyphs">abc</text><rect x="10.8" y="10.8" width="8.8" height="8.6" rx="1.4" fill="#c9a400"/><path d="M17.6,12.6 L13.4,16.8" stroke="#fff" stroke-width="2"/><path d="M12.2,18 l0.6,-1.8 l1.2,1.2z" fill="#fff"/></g>
<g transform="translate(847.2,70.8)"><circle cx="10" cy="8.6" r="8" fill="#5e8fc8" stroke="#2d4f7a" stroke-width="0.8"/><path d="M2,8.6 H18 M10,0.6 V16 M4,3.6 Q10,6.4 16,3.6 M3.4,13 Q10,10.4 16.6,13 M10,0.6 Q4.6,8.6 10,16.6 M10,0.6 Q15.4,8.6 10,16.6" fill="none" stroke="#cfe0f4" stroke-width="0.6"/><path d="M5,5 h3 v2 h-3z M11,5.4 h4 v3 h-4z" fill="#dbe8f6" opacity="0.8"/><path d="M4.4,13 L7,11 H9 L10,12.4 L11,11 H13 L15.6,13 L17.2,17 A2.4,2.4 0 0 1 12.2,17.6 L11.2,15 H8.8 L7.8,17.6 A2.4,2.4 0 0 1 2.8,17 Z" fill="#0c0c0c"/><ellipse cx="5.4" cy="17.4" rx="1.9" ry="1" fill="#f0f0f0"/><ellipse cx="14.6" cy="17.4" rx="1.9" ry="1" fill="#f0f0f0"/></g>
<g transform="translate(886.5,70.8)"><path d="M9.6,1.4 C6.4,1.4 6,2.8 6,4.2 V6.2 H10.2 V7 H4.2 C2.2,7 1.4,8.6 1.4,10.4 C1.4,12.4 2.2,13.8 4.2,13.8 H5.8 V11.4 C5.8,9.8 7,8.8 8.6,8.8 H12 C13.4,8.8 14.2,7.8 14.2,6.6 V4.2 C14.2,2.4 12.6,1.4 9.6,1.4 Z" fill="#3b78ae"/><circle cx="7.8" cy="3.6" r="0.8" fill="#fff"/><path d="M10.6,18.8 C13.8,18.8 14.2,17.4 14.2,16 V14 H10 V13.2 H16 C18,13.2 18.8,11.6 18.8,9.8 C18.8,7.8 18,6.4 16,6.4 H14.4 V8.8 C14.4,10.4 13.2,11.4 11.6,11.4 H8.2 C6.8,11.4 6,12.4 6,13.6 V16 C6,17.8 7.6,18.8 10.6,18.8 Z" fill="#f6c52d"/><circle cx="12.4" cy="16.6" r="0.8" fill="#fff"/><path d="M14.2,15.2 L18.6,17 L14.2,18.8" fill="none" stroke="#222" stroke-width="1"/></g>
<g transform="translate(925.5,70.8)"><rect x="1.8" y="1.4" width="16.4" height="17.2" rx="0.8" fill="#5d8fc6" stroke="#2c3e52" stroke-width="0.8"/><rect x="1.8" y="1.4" width="4.6" height="17.2" fill="#2c3e52"/><text x="12.2" y="14.6" font-size="12.5" fill="#fff" text-anchor="middle" font-family="Liberation Sans,sans-serif">?</text></g>
</svg></div>
<div id="browser" class="abs" style="left:0;top:97px;width:148px;height:190px">
</div>
<span id="t15" class="t " style="left:3.6px;top:97.0px;font-size:10.4px;line-height:14px;color:#000;transform:scaleX(0.6857);">ブラウザ</span>
<svg class="abs" style="left:121.4px;top:100.0px" width="22" height="10" viewBox="0 0 22 10">
<rect x="0.5" y="0.5" width="8.2" height="8.2" rx="1.7" fill="#f1f1f1" stroke="#8e8e8e" stroke-width="1.1"/><rect x="2.4" y="3.6" width="3.4" height="3.2" rx="0.6" fill="none" stroke="#6a6a6a" stroke-width="0.8"/><path d="M4,3.4 V2.4 H7 V5.4 H6" fill="none" stroke="#6a6a6a" stroke-width="0.8"/>
<rect x="11.9" y="0.5" width="8.2" height="8.2" rx="1.7" fill="#f1f1f1" stroke="#8e8e8e" stroke-width="1.1"/><path d="M13.9,2.5 l4.2,4.2 M18.1,2.5 l-4.2,4.2" stroke="#555" stroke-width="1.3"/>
</svg>
<svg class="abs" style="left:0;top:112.0px" width="148" height="24" viewBox="0 0 148 24">
<g transform="translate(6.4,5.4) scale(0.66)"><rect x="1.6" y="1.4" width="13.4" height="12.6" fill="#ececec" stroke="#707070" stroke-width="1.2"/><rect x="11.4" y="11.4" width="7.2" height="7.2" rx="1.4" fill="#4f9e5e"/><path d="M15,12.8 v4.4 M12.8,15 h4.4" stroke="#fff" stroke-width="1.6"/></g>
<g transform="translate(26.4,5.4) scale(0.66)"><g transform="scale(1.0)"><path d="M1.8,8.8 C2.2,4 6,1.2 9.8,1.2 C12.2,1.2 14.2,2.2 15.6,3.8 L18.1,1.9 V9.4 H11.7 L13.3,7.2 C12,5.8 10.6,5.4 9.2,5.4 C6.6,5.4 4.6,6.6 3.4,8.6 Z" fill="#6b9ed6" stroke="#4a80c0" stroke-width="0.5" stroke-linejoin="round"/><path d="M1.8,8.8 C2.2,4 6,1.2 9.8,1.2 C12.2,1.2 14.2,2.2 15.6,3.8 L18.1,1.9 V9.4 H11.7 L13.3,7.2 C12,5.8 10.6,5.4 9.2,5.4 C6.6,5.4 4.6,6.6 3.4,8.6 Z" fill="#4a82c4" stroke="#3b70b0" stroke-width="0.5" stroke-linejoin="round" transform="rotate(180 10.1 10)"/></g></g>
<g transform="translate(46.1,5.4) scale(0.66)"><path d="M2.4,3 H17.6 L11.8,10.2 V17.6 L8.2,15.4 V10.2 Z" fill="#5d8fc6" stroke="#3b6ea5" stroke-width="0.8" stroke-linejoin="round"/><rect x="2.4" y="1.8" width="15.2" height="2.6" rx="0.8" fill="#f3d93c" stroke="#d2b21a" stroke-width="0.6"/></g>
<g transform="translate(66.4,5.4) scale(0.66)"><path d="M2.4,2.6 H8 M2.4,2.6 V17.4 H8" fill="none" stroke="#777" stroke-width="1.2"/><rect x="5" y="5.2" width="3.4" height="3.4" fill="#f2a01e"/><rect x="5" y="12.4" width="3.4" height="3.4" fill="#f2a01e"/><path d="M13,1 L18.6,8 H15.4 V18 H10.6 V8 H7.4 Z" fill="#4c80bb" stroke="#365f90" stroke-width="0.7"/></g>
<g transform="translate(86.0,5.4) scale(0.66)"><circle cx="10" cy="10" r="8.6" fill="#5d8fc6" stroke="#4d7fb6" stroke-width="0.7"/><text x="10" y="15.2" font-size="15.0" font-weight="bold" font-style="italic" fill="#fff" text-anchor="middle" font-family="Liberation Serif,serif">i</text></g>
</svg>
<div class="panel-box" style="left:0;top:136.4px;width:143.2px;height:148.2px;overflow:hidden"></div>
<span id="t16" class="t " style="left:33.9px;top:138.3px;font-size:10.3px;line-height:14px;color:#000;transform:scaleX(0.7886);">お気に入り</span>
<span id="t17" class="t " style="left:33.9px;top:152.4px;font-size:10.3px;line-height:14px;color:#000;transform:scaleX(0.7199);">空間ブックマーク</span>
<span id="t18" class="t " style="left:33.9px;top:166.8px;font-size:10.3px;line-height:14px;color:#000;transform:scaleX(0.6820);">プロジェクトホーム</span>
<span id="t19" class="t " style="left:33.9px;top:181.2px;font-size:10.3px;line-height:14px;color:#000;transform:scaleX(0.6930);">ホーム</span>
<span id="t20" class="t " style="left:33.9px;top:195.8px;font-size:10.0px;line-height:14px;color:#000;transform:scaleX(0.8288);">C:¥ (OS)</span>
<span id="t21" class="t " style="left:33.9px;top:210.2px;font-size:10.0px;line-height:14px;color:#000;transform:scaleX(0.9009);">GeoPackage</span>
<span id="t22" class="t " style="left:33.9px;top:224.7px;font-size:10.0px;line-height:14px;color:#000;transform:scaleX(0.9127);">SpatiaLite</span>
<span id="t23" class="t " style="left:33.9px;top:239.2px;font-size:10.0px;line-height:14px;color:#000;transform:scaleX(0.8883);">PostgreSQL</span>
<span id="t24" class="t " style="left:33.9px;top:253.4px;font-size:10.0px;line-height:14px;color:#000;transform:scaleX(0.9129);">SAP HANA</span>
<div class="abs" style="left:1px;top:262px;width:130.6px;height:11.4px;overflow:hidden"><span id="t25" class="t " style="left:32.9px;top:5.7px;font-size:10.0px;line-height:14px;color:#000;transform:scaleX(0.9059);">MS SQL Server</span></div>
<svg class="abs" style="left:0;top:136.0px" width="144" height="150" viewBox="0 0 144 150">
<defs><clipPath id="bclip"><rect x="1" y="1" width="130.6" height="137"/></clipPath></defs><g clip-path="url(#bclip)">
<path d="M5.6,20.9 v6 l3,-3z" fill="#555"/>
<path d="M5.6,35.3 v6 l3,-3z" fill="#555"/>
<path d="M5.6,49.8 v6 l3,-3z" fill="#555"/>
<path d="M5.6,64.2 v6 l3,-3z" fill="#555"/>
<g transform="translate(15.8,2.9) scale(0.66)"><path d="M10,0.8 L12.8,7 L19.6,7.6 L14.4,12 L16,18.6 L10,15 L4,18.6 L5.6,12 L0.4,7.6 L7.2,7 Z" fill="#fdf04a" stroke="#e0bc1a" stroke-width="1.2" stroke-linejoin="round"/></g>
<g transform="translate(16.2,17.7) scale(0.62)"><path d="M3.2,2.4 Q2,2.4 2,4 V16.4 Q2,18 4,18 H17 V2.4 Z" fill="#e4e4e4" stroke="#9c9c9c" stroke-width="1" stroke-linejoin="round"/><path d="M4.6,2.6 V16 Q4.6,17.8 3,17.6" fill="none" stroke="#9c9c9c" stroke-width="0.9"/><path d="M10.2,2 H13.6 V8.6 L11.9,7.2 L10.2,8.6 Z" fill="#5b8ec6" stroke="#3f6fa6" stroke-width="0.6"/></g>
<g transform="translate(16.2,32.1) scale(0.62)"><path d="M1.4,3.6 H7.4 L9,5.4 H18.6 V17 H1.4 Z" fill="#a5d65a" stroke="#8cc63e" stroke-width="0.8"/><path d="M1.4,8 L18.6,17" stroke="#fff" stroke-width="1.4"/><path d="M9.4,7 L16.6,7.4 L15.6,13 L11,12.4 Z" fill="#0f8a1e"/></g>
<g transform="translate(16.2,46.6) scale(0.62)"><path d="M1.6,2.6 H8 L9.6,4.4 H18.4 V17.6 H1.6 Z" fill="#f8f8f8" stroke="#8a8a8a" stroke-width="1"/><path d="M5.4,11.4 L10,7.4 L14.6,11.4 V15.4 H5.4 Z" fill="#fff" stroke="#333" stroke-width="1.3" stroke-linejoin="round"/></g>
<g transform="translate(16.2,61.0) scale(0.62)"><path d="M1.6,2.6 H8 L9.6,4.4 H18.4 V17.6 H1.6 Z" fill="#f6f6f6" stroke="#9a9a9a" stroke-width="1"/></g>
<g transform="translate(15.8,75.0) scale(0.66)"><path d="M0.7,6.6 L10.1,1.6 L19.4,6.6 L10.1,11.9 Z" fill="#9c8000" stroke="#6b5a00" stroke-width="0.6"/><circle cx="10.3" cy="5.9" r="6.2" fill="#a4c2e4" stroke="#86a8d0" stroke-width="0.5"/><path d="M6.2,2.6 l2.4,-0.6 l1,1.6 l-1.6,2.6 l-2.2,0.4 l-0.8,-2z M11.6,1.8 l3,0.6 l1.4,2.4 l-1.6,2 l-2.6,-1.2 l-1,-2z M9,7.6 l2.2,-0.4 l1.2,2 l-1.4,1.8 l-1.8,-1z" fill="#2f5a8e"/><path d="M0.7,6.6 L10.1,11.9 V19.1 L0.7,13 Z" fill="#dcae00" stroke="#6b5a00" stroke-width="0.7" stroke-linejoin="round"/><path d="M19.4,6.6 L10.1,11.9 V19.1 L19.4,13 Z" fill="#ffff78" stroke="#6b5a00" stroke-width="0.7" stroke-linejoin="round"/></g>
<g transform="translate(15.8,89.4) scale(0.66)"><defs><linearGradient id="fg" x1="0" y1="1" x2="1" y2="0"><stop offset="0" stop-color="#4f80b8"/><stop offset="1" stop-color="#b4cbe6"/></linearGradient></defs><path d="M1.8,18.8 C3.6,12.4 8.4,4.6 17.8,0.8 C18,6.4 13.6,11.6 5.4,14.4 C4,15.4 3,16.8 2.4,19 Z" fill="url(#fg)" stroke="#466f9f" stroke-width="0.6" stroke-linejoin="round"/><path d="M2.4,17.6 C5.6,11.6 10,6.4 16.4,2.6" fill="none" stroke="#d4e2f2" stroke-width="0.6"/></g>
<g transform="translate(15.8,103.8) scale(0.66)"><path d="M4,1.6 C0.6,2 0.6,8 2.6,11 C3.6,12.4 5,12 5.4,11 L6.4,14.6 C6.6,18 9.4,19 10.6,17.4 L11.4,13 C12,13.6 13.6,13.6 15.6,13 C17.4,9 19.4,4.4 17.4,2.4 C15.6,0.6 12.4,1.6 11.4,2.2 C9.6,1 6.4,1 4,1.6 Z" fill="#5d8fc6" stroke="#3f6fa6" stroke-width="0.8"/><path d="M11.2,3.4 C12.6,6.4 12.6,10 11.4,12.6 M6,3.4 C5,6.4 5,9 5.6,11" fill="none" stroke="#dbe8f6" stroke-width="0.8"/></g>
<g transform="translate(15.8,118.3) scale(0.66)"><rect x="3.2" y="3.2" width="13.6" height="13.6" fill="#6c9bd0"/><rect x="0.8" y="0.8" width="18.4" height="18.4" fill="none" stroke="#4c80bb" stroke-width="1.2" stroke-dasharray="1.6,1.6"/></g>
<g transform="translate(15.8,132.7) scale(0.66)"><path d="M1,2 C6,0.6 13,1.4 17.6,6 V16 H4.6 Z" fill="#5d8fc6" stroke="#3f6fa6" stroke-width="0.8"/></g>
</g>
<rect x="131.6" y="1" width="10.8" height="136.4" fill="#d3d3d3"/>
<rect x="131.6" y="1" width="10.8" height="10.4" fill="#f3f3f3" stroke="#d0d0d0" stroke-width="0.6"/><path d="M134.4,8 h5.4 l-2.7,-3.2z" fill="#4a4a4a"/>
<rect x="131.9" y="11.6" width="10.3" height="57.4" fill="#f4f4f4" stroke="#c6c6c6" stroke-width="0.6"/>
<rect x="131.6" y="126" width="10.8" height="11.4" fill="#f3f3f3" stroke="#d0d0d0" stroke-width="0.6"/><path d="M134.4,130 h5.4 l-2.7,3.2z" fill="#4a4a4a"/>
<rect x="1" y="137.4" width="130.6" height="10.4" fill="#d3d3d3"/>
<rect x="1" y="137.4" width="10.6" height="10.4" fill="#f3f3f3" stroke="#d0d0d0" stroke-width="0.6"/><path d="M7.6,139.9 v5.4 l-3.2,-2.7z" fill="#4a4a4a"/>
<rect x="11.8" y="137.7" width="98.4" height="9.9" fill="#f4f4f4" stroke="#c6c6c6" stroke-width="0.6"/>
<rect x="120.6" y="137.4" width="11" height="10.4" fill="#f3f3f3" stroke="#d0d0d0" stroke-width="0.6"/><path d="M124.6,139.9 v5.4 l3.2,-2.7z" fill="#4a4a4a"/>
<rect x="131.6" y="137.4" width="10.8" height="10.4" fill="#f0f0f0"/>
</svg>
<div class="abs" style="left:65px;top:287.4px;width:14px;height:1px;background:repeating-linear-gradient(90deg,#c8c8c8 0 1px,transparent 1px 2.4px)"></div>
<span id="t26" class="t " style="left:3.7px;top:290.2px;font-size:10.4px;line-height:14px;color:#000;transform:scaleX(0.6996);">レイヤ</span>
<svg class="abs" style="left:121.2px;top:292.7px" width="22" height="10" viewBox="0 0 22 10">
<rect x="0.5" y="0.5" width="8.2" height="8.2" rx="1.7" fill="#f1f1f1" stroke="#8e8e8e" stroke-width="1.1"/><rect x="2.4" y="3.6" width="3.4" height="3.2" rx="0.6" fill="none" stroke="#6a6a6a" stroke-width="0.8"/><path d="M4,3.4 V2.4 H7 V5.4 H6" fill="none" stroke="#6a6a6a" stroke-width="0.8"/>
<rect x="11.9" y="0.5" width="8.2" height="8.2" rx="1.7" fill="#f1f1f1" stroke="#8e8e8e" stroke-width="1.1"/><path d="M13.9,2.5 l4.2,4.2 M18.1,2.5 l-4.2,4.2" stroke="#555" stroke-width="1.3"/>
</svg>
<svg class="abs" style="left:0;top:306.0px" width="148" height="23" viewBox="0 0 148 23">
<g transform="translate(6.5,4.8) scale(0.62)"><path d="M0.4,9.6 L8.6,3.4 L14,10.6 L6.4,17.6 Z" fill="#d8a85c"/><path d="M0.4,9.6 L3.4,7.4 L9.4,14.8 L6.4,17.6 Z" fill="#d83a34"/><path d="M3.4,7.4 L6,5.4 L11.8,12.6 L9.4,14.8 Z" fill="#4f86d0"/><path d="M6,5.4 L8.6,3.4 L14,10.6 L11.8,12.6 Z" fill="#f3d42a"/><path d="M10.4,13.6 L13.6,9.6 L15.6,11.2 L12.4,15.2 Z" fill="#e6c9a0"/><path d="M13.6,9.4 L19.4,1.6" stroke="#d09238" stroke-width="2.6" stroke-linecap="round"/></g>
<g transform="translate(26.4,4.8) scale(0.62)"><path d="M7,18 V6 L10,1.6 H14.4 V18 Z" fill="#d9d9d9" stroke="#808080" stroke-width="1"/><path d="M3,18 V10 L5.4,6.6 H9 V18 Z" fill="#ececec" stroke="#909090" stroke-width="1"/><rect x="10.6" y="11.6" width="8" height="8" rx="1.2" fill="#4f9e5e"/><rect x="12.6" y="13.6" width="4" height="4" fill="#fff"/></g>
<g transform="translate(45.6,4.0) scale(0.7)"><path d="M0.6,9.6 Q9,0.6 17.4,9.6 Q9,17.6 0.6,9.6 Z" fill="#f4f4f4" stroke="#a8a8a8" stroke-width="1"/><circle cx="9" cy="9.2" r="4.2" fill="#5d8fc6"/><circle cx="9" cy="9.2" r="1.8" fill="#26486e"/><path d="M14.6,16.4 h5 l-2.5,3z" fill="#555"/></g>
<g transform="translate(66.2,4.2) scale(0.68)"><path d="M2.4,3 H17.6 L11.8,10.2 V17.6 L8.2,15.4 V10.2 Z" fill="#5d8fc6" stroke="#3b6ea5" stroke-width="0.8" stroke-linejoin="round"/><rect x="2.4" y="1.8" width="15.2" height="2.6" rx="0.8" fill="#f3d93c" stroke="#d2b21a" stroke-width="0.6"/><path d="M14.6,16.8 h5 l-2.5,3z" fill="#555"/></g>
<g transform="translate(87.2,4.8) scale(0.62)"><text x="-1.5" y="14" font-size="25" font-weight="bold" fill="#6a2a7a" font-family="Liberation Serif,serif">ε</text><rect x="9.6" y="11.6" width="8" height="7" rx="1" fill="#e6e6e6" stroke="#a0a0a0" stroke-width="0.8"/><path d="M12,18.6 v-3 h3 v3" fill="#fff" stroke="#a0a0a0" stroke-width="0.7"/></g>
<path d="M104.3,9.9 h6.2 l-3.1,3.3z" fill="#4a4a4a"/>
<path d="M133.6,9 l2.2,2.3 l-2.2,2.3 M137,9 l2.2,2.3 l-2.2,2.3" fill="none" stroke="#3a3a3a" stroke-width="1.25"/>
</svg>
<div class="panel-box" style="left:0;top:329.2px;width:143.2px;height:473.2px"></div>
<div class="abs" style="left:1px;top:359.2px;width:141.5px;height:14px;background:linear-gradient(#1c88de,#087bda)"></div>
<span id="t27" class="t " style="left:52.6px;top:330.5px;font-size:10.3px;line-height:14px;color:#000;transform:scaleX(0.6999);font-weight:bold">オーバーレイポリゴン</span>
<span id="t28" class="t " style="left:52.6px;top:345.8px;font-size:10.3px;line-height:14px;color:#7a7a7a;transform:scaleX(0.7769);font-style:italic">交差ライン</span>
<span id="t29" class="t " style="left:53.0px;top:360.1px;font-size:10.3px;line-height:14px;color:#fff;transform:scaleX(0.7705);"><u>交差ポイント</u></span>
<span id="t30" class="t " style="left:53.3px;top:374.4px;font-size:10.3px;line-height:14px;color:#7a7a7a;transform:scaleX(0.7980);font-style:italic">交差ポリゴン</span>
<svg class="abs" style="left:0;top:329.0px" width="144" height="62" viewBox="0 0 144 62">
<rect x="19.6" y="3.6" width="10.2" height="10.2" fill="#fff" stroke="#9c9c9c" stroke-width="0.8"/>
<rect x="19.6" y="17.9" width="10.2" height="10.2" fill="#fff" stroke="#b8b8b8" stroke-width="0.8"/>
<rect x="19.6" y="32.2" width="10.2" height="10.2" fill="#fff" stroke="#9c9c9c" stroke-width="0.8"/>
<rect x="19.6" y="46.6" width="10.2" height="10.2" fill="#fff" stroke="#b8b8b8" stroke-width="0.8"/>
<path d="M21.6,9.1 l2.4,3 l4,-6" fill="none" stroke="#111" stroke-width="1.6"/>
<path d="M21.6,37.7 l2.4,3 l4,-6" fill="none" stroke="#111" stroke-width="1.6"/>
<rect x="35.4" y="2.7" width="12" height="12" fill="#fff" stroke="#2dfb4e" stroke-width="1.1"/><path d="M35.4,14.7 L47.4,2.7 M35.4,8.7 l6,-6 M41.4,14.7 l6,-6" stroke="#4cfc68" stroke-width="0.9"/>
<rect x="35" y="20.9" width="11.6" height="4.2" fill="#2ab8d6"/><path d="M35,20.9 h11.6 M35,25.1 h11.6" stroke="#17577a" stroke-width="1"/>
<circle cx="41.6" cy="37.3" r="5" fill="#fefe1c" stroke="#7a2a12" stroke-width="1.1"/>
<defs><linearGradient id="pg" x1="0" y1="0" x2="1" y2="1"><stop offset="0" stop-color="#e4f0fa"/><stop offset="0.55" stop-color="#7fb2dc"/><stop offset="1" stop-color="#1f639f"/></linearGradient></defs>
<rect x="35.2" y="45.6" width="12.4" height="12.2" fill="url(#pg)" stroke="#174a7a" stroke-width="0.7"/>
</svg>
<div class="abs" style="left:145.6px;top:443px;width:1px;height:14px;background:repeating-linear-gradient(180deg,#c8c8c8 0 1px,transparent 1px 2.4px)"></div>
<div id="canvas"></div>
<svg id="map" width="1386" height="704" viewBox="0 0 1386 704" style="position:absolute;left:149px;top:98px">
<defs><clipPath id="cp1"><path d="M118.2,224.3 L520.9,211.1 L520.9,211.1 L519.6,217.9 L518.1,224.6 L516.5,231.3 L514.7,238.0 L512.9,244.6 L510.9,251.3 L508.8,257.8 L506.6,264.3 L504.2,270.8 L501.7,277.3 L499.1,283.6 L496.3,290.0 L493.5,296.2 L490.5,302.4 L487.3,308.6 L484.1,314.7 L480.7,320.7 L477.2,326.6 L473.6,332.5 L469.8,338.3 L465.9,344.0 L462.0,349.6 L457.9,355.2 L453.7,360.6 L449.3,366.0 L444.9,371.3 L440.4,376.5 L435.7,381.6 L431.0,386.6 L426.1,391.5 L421.2,396.3 L416.1,401.0 L411.0,405.6 L405.8,410.1 L400.4,414.5 L395.0,418.7 L389.5,422.9 L384.0,426.9 L378.3,430.9 L372.5,434.7 L366.7,438.4 L360.8,441.9 L354.8,445.4 L348.8,448.7 L342.7,451.9 L336.5,455.0 L330.3,457.9 L324.0,460.7 L317.6,463.4 L311.2,465.9 L304.7,468.3 L298.2,470.6 L291.7,472.7 L285.1,474.7 L278.4,476.5 L271.8,478.2 L265.0,479.8 L258.3,481.2 L251.5,482.5 L244.8,483.6 L244.8,483.6 L238.9,486.3 L232.9,488.7 L226.8,490.8 L220.7,492.6 L214.4,494.2 L208.1,495.5 L201.7,496.5 L195.3,497.2 L188.9,497.6 L182.5,497.7 L176.0,497.6 L169.6,497.2 L163.2,496.4 L156.8,495.4 L150.5,494.1 L144.3,492.6 L138.1,490.7 L132.0,488.6 L126.1,486.2 L120.2,483.6 L114.4,480.6 L108.8,477.5 L103.4,474.1 L98.1,470.4 L92.9,466.5 L88.0,462.4 L83.2,458.1 L78.6,453.5 L74.3,448.8 L70.1,443.9 L66.2,438.8 L62.5,433.5 L59.1,428.1 L55.9,422.5 L52.9,416.7 L50.2,410.9 L47.8,404.9 L45.6,398.9 L43.7,392.7 L42.1,386.5 L40.8,380.2 L39.7,373.8 L39.0,367.4 L38.5,361.0 L38.3,354.6 L38.4,348.1 L38.8,341.7 L39.4,335.3 L40.4,328.9 L41.6,322.6 L43.2,316.3 L45.0,310.2 L47.0,304.1 L49.4,298.1 L52.0,292.2 L54.8,286.4 L58.0,280.8 L61.3,275.3 L64.9,269.9 L68.8,264.8 L72.9,259.8 L77.1,255.0 L81.6,250.4 L86.3,246.0 L91.2,241.8 L96.3,237.8 L101.6,234.1 L107.0,230.6 L112.5,227.3 L118.2,224.3Z"/></clipPath><clipPath id="cp2"><path d="M873.9,166.4 L866.8,165.5 L859.8,164.7 L852.7,164.3 L845.5,164.1 L838.4,164.2 L831.3,164.5 L824.2,165.1 L817.2,165.9 L810.1,167.0 L803.1,168.4 L796.2,170.0 L789.3,171.9 L782.6,174.0 L775.8,176.4 L769.2,179.0 L762.7,181.9 L756.3,185.0 L750.0,188.3 L743.9,191.9 L737.8,195.7 L732.0,199.7 L726.2,203.9 L720.6,208.3 L715.2,213.0 L710.0,217.8 L705.0,222.8 L700.1,228.0 L695.4,233.4 L691.0,238.9 L686.7,244.6 L682.6,250.5 L678.8,256.5 L675.2,262.6 L671.8,268.9 L668.7,275.2 L665.8,281.7 L663.1,288.3 L660.7,295.0 L658.5,301.8 L656.6,308.7 L654.9,315.6 L653.5,322.5 L652.3,329.6 L651.4,336.6 L650.7,343.7 L650.4,350.8 L650.2,357.9 L650.4,365.1 L650.8,372.2 L651.4,379.2 L652.4,386.3 L653.5,393.3 L655.0,400.3 L656.7,407.2 L658.6,414.0 L660.8,420.8 L663.3,427.5 L666.0,434.1 L668.9,440.6 L672.1,447.0 L675.5,453.2 L679.1,459.3 L682.9,465.3 L687.0,471.2 L691.3,476.9 L695.8,482.4 L700.4,487.7 L705.3,492.9 L710.4,497.9 L715.6,502.7 L721.0,507.3 L726.6,511.8 L732.4,516.0 L738.3,520.0 L744.3,523.7 L750.5,527.3 L756.8,530.6 L763.2,533.7 L769.7,536.5 L776.3,539.2Z"/></clipPath></defs>
<circle cx="176.3" cy="295.4" r="5.85" fill="#fdfd1c" stroke="#8f2c24" stroke-width="1.4"/>
<circle cx="270.9" cy="287.3" r="5.85" fill="#fdfd1c" stroke="#8f2c24" stroke-width="1.4"/>
<circle cx="433.9" cy="291.2" r="5.85" fill="#fdfd1c" stroke="#8f2c24" stroke-width="1.4"/>
<circle cx="481.2" cy="230.5" r="5.85" fill="#fdfd1c" stroke="#8f2c24" stroke-width="1.4"/>
<circle cx="505.2" cy="279.4" r="5.85" fill="#fdfd1c" stroke="#8f2c24" stroke-width="1.4"/>
<circle cx="374.0" cy="340.8" r="5.85" fill="#fdfd1c" stroke="#8f2c24" stroke-width="1.4"/>
<circle cx="473.0" cy="350.5" r="5.85" fill="#fdfd1c" stroke="#8f2c24" stroke-width="1.4"/>
<circle cx="306.6" cy="437.3" r="5.85" fill="#fdfd1c" stroke="#8f2c24" stroke-width="1.4"/>
<circle cx="447.6" cy="425.5" r="5.85" fill="#fdfd1c" stroke="#8f2c24" stroke-width="1.4"/>
<circle cx="509.1" cy="420.7" r="5.85" fill="#fdfd1c" stroke="#8f2c24" stroke-width="1.4"/>
<circle cx="553.8" cy="456.1" r="5.85" fill="#fdfd1c" stroke="#8f2c24" stroke-width="1.4"/>
<circle cx="567.4" cy="379.0" r="5.85" fill="#fdfd1c" stroke="#8f2c24" stroke-width="1.4"/>
<circle cx="568.2" cy="292.9" r="5.85" fill="#fdfd1c" stroke="#8f2c24" stroke-width="1.4"/>
<circle cx="627.5" cy="247.2" r="5.85" fill="#fdfd1c" stroke="#8f2c24" stroke-width="1.4"/>
<circle cx="678.5" cy="300.3" r="5.85" fill="#fdfd1c" stroke="#8f2c24" stroke-width="1.4"/>
<circle cx="762.7" cy="308.2" r="5.85" fill="#fdfd1c" stroke="#8f2c24" stroke-width="1.4"/>
<circle cx="791.5" cy="381.5" r="5.85" fill="#fdfd1c" stroke="#8f2c24" stroke-width="1.4"/>
<circle cx="865.8" cy="451.9" r="5.85" fill="#fdfd1c" stroke="#8f2c24" stroke-width="1.4"/>
<circle cx="945.6" cy="304.9" r="5.85" fill="#fdfd1c" stroke="#8f2c24" stroke-width="1.4"/>
<circle cx="969.7" cy="381.6" r="5.85" fill="#fdfd1c" stroke="#8f2c24" stroke-width="1.4"/>
<path clip-path="url(#cp1)" d="M37.00,211.40L523.00,-274.60M37.00,219.40L523.00,-266.60M37.00,227.40L523.00,-258.60M37.00,235.40L523.00,-250.60M37.00,243.40L523.00,-242.60M37.00,251.40L523.00,-234.60M37.00,259.40L523.00,-226.60M37.00,267.40L523.00,-218.60M37.00,275.40L523.00,-210.60M37.00,283.40L523.00,-202.60M37.00,291.40L523.00,-194.60M37.00,299.40L523.00,-186.60M37.00,307.40L523.00,-178.60M37.00,315.40L523.00,-170.60M37.00,323.40L523.00,-162.60M37.00,331.40L523.00,-154.60M37.00,339.40L523.00,-146.60M37.00,347.40L523.00,-138.60M37.00,355.40L523.00,-130.60M37.00,363.40L523.00,-122.60M37.00,371.40L523.00,-114.60M37.00,379.40L523.00,-106.60M37.00,387.40L523.00,-98.60M37.00,395.40L523.00,-90.60M37.00,403.40L523.00,-82.60M37.00,411.40L523.00,-74.60M37.00,419.40L523.00,-66.60M37.00,427.40L523.00,-58.60M37.00,435.40L523.00,-50.60M37.00,443.40L523.00,-42.60M37.00,451.40L523.00,-34.60M37.00,459.40L523.00,-26.60M37.00,467.40L523.00,-18.60M37.00,475.40L523.00,-10.60M37.00,483.40L523.00,-2.60M37.00,491.40L523.00,5.40M37.00,499.40L523.00,13.40M37.00,507.40L523.00,21.40M37.00,515.40L523.00,29.40M37.00,523.40L523.00,37.40M37.00,531.40L523.00,45.40M37.00,539.40L523.00,53.40M37.00,547.40L523.00,61.40M37.00,555.40L523.00,69.40M37.00,563.40L523.00,77.40M37.00,571.40L523.00,85.40M37.00,579.40L523.00,93.40M37.00,587.40L523.00,101.40M37.00,595.40L523.00,109.40M37.00,603.40L523.00,117.40M37.00,611.40L523.00,125.40M37.00,619.40L523.00,133.40M37.00,627.40L523.00,141.40M37.00,635.40L523.00,149.40M37.00,643.40L523.00,157.40M37.00,651.40L523.00,165.40M37.00,659.40L523.00,173.40M37.00,667.40L523.00,181.40M37.00,675.40L523.00,189.40M37.00,683.40L523.00,197.40M37.00,691.40L523.00,205.40M37.00,699.40L523.00,213.40M37.00,707.40L523.00,221.40M37.00,715.40L523.00,229.40M37.00,723.40L523.00,237.40M37.00,731.40L523.00,245.40M37.00,739.40L523.00,253.40M37.00,747.40L523.00,261.40M37.00,755.40L523.00,269.40M37.00,763.40L523.00,277.40M37.00,771.40L523.00,285.40M37.00,779.40L523.00,293.40M37.00,787.40L523.00,301.40M37.00,795.40L523.00,309.40M37.00,803.40L523.00,317.40M37.00,811.40L523.00,325.40M37.00,819.40L523.00,333.40M37.00,827.40L523.00,341.40M37.00,835.40L523.00,349.40M37.00,843.40L523.00,357.40M37.00,851.40L523.00,365.40M37.00,859.40L523.00,373.40M37.00,867.40L523.00,381.40M37.00,875.40L523.00,389.40M37.00,883.40L523.00,397.40M37.00,891.40L523.00,405.40M37.00,899.40L523.00,413.40M37.00,907.40L523.00,421.40M37.00,915.40L523.00,429.40M37.00,923.40L523.00,437.40M37.00,931.40L523.00,445.40M37.00,939.40L523.00,453.40M37.00,947.40L523.00,461.40M37.00,955.40L523.00,469.40M37.00,963.40L523.00,477.40M37.00,971.40L523.00,485.40M37.00,979.40L523.00,493.40" stroke="#5cfd77" stroke-width="1.25" fill="none"/>
<path d="M118.2,224.3 L520.9,211.1 L520.9,211.1 L519.6,217.9 L518.1,224.6 L516.5,231.3 L514.7,238.0 L512.9,244.6 L510.9,251.3 L508.8,257.8 L506.6,264.3 L504.2,270.8 L501.7,277.3 L499.1,283.6 L496.3,290.0 L493.5,296.2 L490.5,302.4 L487.3,308.6 L484.1,314.7 L480.7,320.7 L477.2,326.6 L473.6,332.5 L469.8,338.3 L465.9,344.0 L462.0,349.6 L457.9,355.2 L453.7,360.6 L449.3,366.0 L444.9,371.3 L440.4,376.5 L435.7,381.6 L431.0,386.6 L426.1,391.5 L421.2,396.3 L416.1,401.0 L411.0,405.6 L405.8,410.1 L400.4,414.5 L395.0,418.7 L389.5,422.9 L384.0,426.9 L378.3,430.9 L372.5,434.7 L366.7,438.4 L360.8,441.9 L354.8,445.4 L348.8,448.7 L342.7,451.9 L336.5,455.0 L330.3,457.9 L324.0,460.7 L317.6,463.4 L311.2,465.9 L304.7,468.3 L298.2,470.6 L291.7,472.7 L285.1,474.7 L278.4,476.5 L271.8,478.2 L265.0,479.8 L258.3,481.2 L251.5,482.5 L244.8,483.6 L244.8,483.6 L238.9,486.3 L232.9,488.7 L226.8,490.8 L220.7,492.6 L214.4,494.2 L208.1,495.5 L201.7,496.5 L195.3,497.2 L188.9,497.6 L182.5,497.7 L176.0,497.6 L169.6,497.2 L163.2,496.4 L156.8,495.4 L150.5,494.1 L144.3,492.6 L138.1,490.7 L132.0,488.6 L126.1,486.2 L120.2,483.6 L114.4,480.6 L108.8,477.5 L103.4,474.1 L98.1,470.4 L92.9,466.5 L88.0,462.4 L83.2,458.1 L78.6,453.5 L74.3,448.8 L70.1,443.9 L66.2,438.8 L62.5,433.5 L59.1,428.1 L55.9,422.5 L52.9,416.7 L50.2,410.9 L47.8,404.9 L45.6,398.9 L43.7,392.7 L42.1,386.5 L40.8,380.2 L39.7,373.8 L39.0,367.4 L38.5,361.0 L38.3,354.6 L38.4,348.1 L38.8,341.7 L39.4,335.3 L40.4,328.9 L41.6,322.6 L43.2,316.3 L45.0,310.2 L47.0,304.1 L49.4,298.1 L52.0,292.2 L54.8,286.4 L58.0,280.8 L61.3,275.3 L64.9,269.9 L68.8,264.8 L72.9,259.8 L77.1,255.0 L81.6,250.4 L86.3,246.0 L91.2,241.8 L96.3,237.8 L101.6,234.1 L107.0,230.6 L112.5,227.3 L118.2,224.3Z" fill="none" stroke="#1bf83f" stroke-width="1.45" stroke-linejoin="round"/>
<path clip-path="url(#cp2)" d="M648.00,165.85L876.00,-62.15M648.00,173.85L876.00,-54.15M648.00,181.85L876.00,-46.15M648.00,189.85L876.00,-38.15M648.00,197.85L876.00,-30.15M648.00,205.85L876.00,-22.15M648.00,213.85L876.00,-14.15M648.00,221.85L876.00,-6.15M648.00,229.85L876.00,1.85M648.00,237.85L876.00,9.85M648.00,245.85L876.00,17.85M648.00,253.85L876.00,25.85M648.00,261.85L876.00,33.85M648.00,269.85L876.00,41.85M648.00,277.85L876.00,49.85M648.00,285.85L876.00,57.85M648.00,293.85L876.00,65.85M648.00,301.85L876.00,73.85M648.00,309.85L876.00,81.85M648.00,317.85L876.00,89.85M648.00,325.85L876.00,97.85M648.00,333.85L876.00,105.85M648.00,341.85L876.00,113.85M648.00,349.85L876.00,121.85M648.00,357.85L876.00,129.85M648.00,365.85L876.00,137.85M648.00,373.85L876.00,145.85M648.00,381.85L876.00,153.85M648.00,389.85L876.00,161.85M648.00,397.85L876.00,169.85M648.00,405.85L876.00,177.85M648.00,413.85L876.00,185.85M648.00,421.85L876.00,193.85M648.00,429.85L876.00,201.85M648.00,437.85L876.00,209.85M648.00,445.85L876.00,217.85M648.00,453.85L876.00,225.85M648.00,461.85L876.00,233.85M648.00,469.85L876.00,241.85M648.00,477.85L876.00,249.85M648.00,485.85L876.00,257.85M648.00,493.85L876.00,265.85M648.00,501.85L876.00,273.85M648.00,509.85L876.00,281.85M648.00,517.85L876.00,289.85M648.00,525.85L876.00,297.85M648.00,533.85L876.00,305.85M648.00,541.85L876.00,313.85M648.00,549.85L876.00,321.85M648.00,557.85L876.00,329.85M648.00,565.85L876.00,337.85M648.00,573.85L876.00,345.85M648.00,581.85L876.00,353.85M648.00,589.85L876.00,361.85M648.00,597.85L876.00,369.85M648.00,605.85L876.00,377.85M648.00,613.85L876.00,385.85M648.00,621.85L876.00,393.85M648.00,629.85L876.00,401.85M648.00,637.85L876.00,409.85M648.00,645.85L876.00,417.85M648.00,653.85L876.00,425.85M648.00,661.85L876.00,433.85M648.00,669.85L876.00,441.85M648.00,677.85L876.00,449.85M648.00,685.85L876.00,457.85M648.00,693.85L876.00,465.85M648.00,701.85L876.00,473.85M648.00,709.85L876.00,481.85M648.00,717.85L876.00,489.85M648.00,725.85L876.00,497.85M648.00,733.85L876.00,505.85M648.00,741.85L876.00,513.85M648.00,749.85L876.00,521.85M648.00,757.85L876.00,529.85M648.00,765.85L876.00,537.85" stroke="#5cfd77" stroke-width="1.25" fill="none"/>
<path d="M873.9,166.4 L866.8,165.5 L859.8,164.7 L852.7,164.3 L845.5,164.1 L838.4,164.2 L831.3,164.5 L824.2,165.1 L817.2,165.9 L810.1,167.0 L803.1,168.4 L796.2,170.0 L789.3,171.9 L782.6,174.0 L775.8,176.4 L769.2,179.0 L762.7,181.9 L756.3,185.0 L750.0,188.3 L743.9,191.9 L737.8,195.7 L732.0,199.7 L726.2,203.9 L720.6,208.3 L715.2,213.0 L710.0,217.8 L705.0,222.8 L700.1,228.0 L695.4,233.4 L691.0,238.9 L686.7,244.6 L682.6,250.5 L678.8,256.5 L675.2,262.6 L671.8,268.9 L668.7,275.2 L665.8,281.7 L663.1,288.3 L660.7,295.0 L658.5,301.8 L656.6,308.7 L654.9,315.6 L653.5,322.5 L652.3,329.6 L651.4,336.6 L650.7,343.7 L650.4,350.8 L650.2,357.9 L650.4,365.1 L650.8,372.2 L651.4,379.2 L652.4,386.3 L653.5,393.3 L655.0,400.3 L656.7,407.2 L658.6,414.0 L660.8,420.8 L663.3,427.5 L666.0,434.1 L668.9,440.6 L672.1,447.0 L675.5,453.2 L679.1,459.3 L682.9,465.3 L687.0,471.2 L691.3,476.9 L695.8,482.4 L700.4,487.7 L705.3,492.9 L710.4,497.9 L715.6,502.7 L721.0,507.3 L726.6,511.8 L732.4,516.0 L738.3,520.0 L744.3,523.7 L750.5,527.3 L756.8,530.6 L763.2,533.7 L769.7,536.5 L776.3,539.2Z" fill="none" stroke="#1bf83f" stroke-width="1.45" stroke-linejoin="round"/>
<text x="230.4" y="344.3" font-size="10" fill="#3c3c3c" textLength="54" lengthAdjust="spacingAndGlyphs">オーバーレイ1</text>
<text x="726.8" y="339.0" font-size="10" fill="#3c3c3c" textLength="55" lengthAdjust="spacingAndGlyphs">オーバーレイ2</text>
</svg>
<div id="statusbar"></div>
<div class="field" style="left:3.4px;top:805.4px;width:159.6px;height:17.2px"></div>
<span id="t31" class="t " style="left:26.0px;top:807.6px;font-size:8.6px;line-height:12px;color:#6b6b6b;transform:scaleX(1.1580);">検索(Ctrl + K)</span>
<div class="field" style="left:973.4px;top:805.4px;width:89.8px;height:17.2px"></div>
<span id="t32" class="t " style="left:953.2px;top:807.8px;font-size:8.4px;line-height:12px;color:#000;transform:scaleX(0.9791);font-weight:bold">座標</span>
<span id="t33" class="t " style="left:980.9px;top:807.7px;font-size:8.6px;line-height:12px;color:#000;transform:scaleX(1.0340);">-329111,15060940</span>
<span id="t34" class="t " style="left:1089.3px;top:807.8px;font-size:8.4px;line-height:12px;color:#000;transform:scaleX(0.9970);font-weight:bold">縮尺</span>
<div class="field" style="left:1110.2px;top:805.4px;width:62.6px;height:17.2px"><div class="abs" style="left:45.4px;top:0;width:1px;height:15.2px;background:#d0d0d0"></div></div>
<span id="t35" class="t " style="left:1111.6px;top:807.7px;font-size:8.6px;line-height:12px;color:#000;transform:scaleX(0.9578);">171507648</span>
<span id="t36" class="t " style="left:1199.7px;top:807.8px;font-size:8.4px;line-height:12px;color:#000;transform:scaleX(0.8716);font-weight:bold">拡大</span>
<div class="field" style="left:1219.6px;top:805.4px;width:65.4px;height:17.2px"><div class="abs" style="left:53.6px;top:0;width:1px;height:15.2px;background:#d0d0d0"></div></div>
<span id="t37" class="t " style="left:1222.6px;top:807.7px;font-size:8.6px;line-height:12px;color:#000;transform:scaleX(0.9097);">100%</span>
<span id="t38" class="t " style="left:1292.6px;top:807.8px;font-size:8.4px;line-height:12px;color:#000;transform:scaleX(0.9910);font-weight:bold">回転</span>
<div class="field" style="left:1317.8px;top:805.4px;width:65.8px;height:17.2px"><div class="abs" style="left:53.8px;top:0;width:1px;height:15.2px;background:#d0d0d0"></div></div>
<span id="t39" class="t " style="left:1321.3px;top:807.7px;font-size:8.6px;line-height:12px;color:#000;transform:scaleX(0.9673);">0.0 °</span>
<span id="t40" class="t " style="left:1404.4px;top:807.7px;font-size:8.6px;line-height:12px;color:#000;transform:scaleX(0.6629);">レンダ</span>
<span id="t41" class="t " style="left:1448.9px;top:807.7px;font-size:8.6px;line-height:12px;color:#000;transform:scaleX(0.9350);">ESRI:102595</span>
<svg class="abs" style="left:0;top:803.0px" width="1536" height="23" viewBox="0 0 1536 23">
<circle cx="13.6" cy="9.8" r="3.3" fill="none" stroke="#777" stroke-width="1"/><path d="M16,12.4 l3,3.2" stroke="#777" stroke-width="1.2"/>
<path d="M1066.4,13.4 L1078.8,5" stroke="#8a8a8a" stroke-width="0.8"/><g transform="translate(1072.6,10.7) rotate(-40)"><rect x="-3.9" y="-6.4" width="7.8" height="12.8" rx="3.9" fill="#fafafa" stroke="#383838" stroke-width="1.4"/><path d="M-3.9,-0.4 V-2.5 A3.9,3.9 0 0 1 3.9,-2.5 V-0.4 Z" fill="#383838"/><path d="M-1.4,-5.2 V-0.8 M1.4,-5.2 V-0.8" stroke="#e8e8e8" stroke-width="0.8"/><rect x="-0.9" y="2" width="1.8" height="1.8" fill="#383838"/></g>
<path d="M1160.9,9.9 h6.2 l-3.1,3.3z" fill="#4a4a4a"/>
<path d="M1184.8,10.4 v-2.4 a2.6,2.6 0 0 1 5.2,0 v2.4" fill="none" stroke="#9a9a9a" stroke-width="1.4"/><rect x="1182.6" y="10" width="9.6" height="7.6" rx="1" fill="#8a8a8a"/>
<path d="M1276.9,9.8 h5 l-2.5,-3.2z M1276.9,12.6 h5 l-2.5,3.2z" fill="#555"/>
<path d="M1375.3,9.8 h5 l-2.5,-3.2z M1375.3,12.6 h5 l-2.5,3.2z" fill="#555"/>
<rect x="1389.2" y="5.8" width="10.2" height="10.2" fill="#fff" stroke="#a0a0a0" stroke-width="0.8"/><path d="M1391.2,11.2 l2.4,3 l4,-6.2" fill="none" stroke="#111" stroke-width="1.5"/>
<g transform="translate(1441.8,11.4)" fill="none" stroke="#777" stroke-width="0.7"><circle r="4.6"/><ellipse rx="2.2" ry="4.6"/><path d="M-4.6,0 H4.6 M-4,-2.3 H4 M-4,2.3 H4 M0,-4.6 V4.6"/><path d="M-6,0 H6" stroke-width="0.9"/></g>
<path d="M1523.4,5.2 C1527.2,5.2 1529.8,7.2 1529.8,10 C1529.8,11.6 1528.8,13 1527.4,13.8 L1529,17 L1525.2,14.6 C1524.6,14.7 1524,14.8 1523.4,14.8 C1519.6,14.8 1517,12.6 1517,10 C1517,7.2 1519.6,5.2 1523.4,5.2 Z" fill="#6e6e6e"/><circle cx="1520.6" cy="10" r="0.9" fill="#fff"/><circle cx="1523.4" cy="10" r="0.9" fill="#fff"/><circle cx="1526.2" cy="10" r="0.9" fill="#fff"/>
</svg>
<div class="abs" style="left:1534.8px;top:0;width:1.2px;height:56px;background:linear-gradient(#ececf4 0,#ececf4 23px,#f6f6f6 24px,#f6f6f6 56px)"></div>
<div class="abs" style="left:1534.8px;top:56px;width:1.2px;height:759.6px;background:#101010"></div>
<div class="abs" style="left:1534.8px;top:815.6px;width:1.2px;height:10.4px;background:#efe2c8"></div>
<div class="abs" style="left:0;top:825px;width:1534.8px;height:1px;background:linear-gradient(90deg,#d2c9b8,#cbc6ba 50%,#bcc6bc)"></div>
</body></html>
